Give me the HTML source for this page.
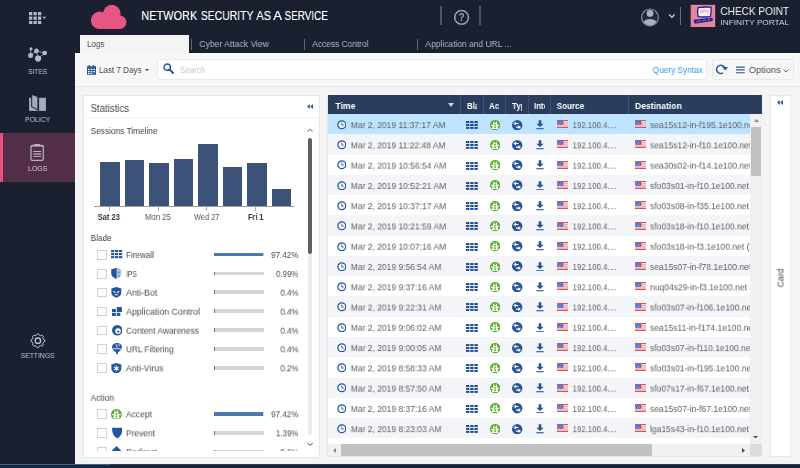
<!DOCTYPE html>
<html><head><meta charset="utf-8"><title>Network Security as a Service</title>
<style>
*{box-sizing:border-box;margin:0;padding:0}
html,body{width:800px;height:468px;overflow:hidden}
body{position:relative;background:#f4f4f4;font-family:"Liberation Sans",sans-serif;color:#333;font-size:9px}
.abs{position:absolute}
#top{position:absolute;left:0;top:0;width:800px;height:53px;background:#1a2030}
#side{position:absolute;left:0;top:0;width:75px;height:468px;background:#1a2030}
#bottom{position:absolute;left:0;top:464px;width:800px;height:4px;background:#1b2537}
#bottomline{position:absolute;left:0;top:464px;width:110px;height:1.300px;background:#2f6aa8;z-index:2}
.navlbl{position:absolute;left:0;width:75px;text-align:center;color:#c9ced8;font-size:7.2px;letter-spacing:.2px}
#active{position:absolute;left:0;top:133px;width:75px;height:49px;background:#522e49;border-left:3px solid #e8517f}
#title{position:absolute;left:141px;top:9px;color:#fff;font-size:12.2px;line-height:16px;white-space:nowrap}
.vsep{position:absolute;width:1px;background:#6b7180}
.tab{position:absolute;top:35px;height:18px;color:#c4c8d0;font-size:8.6px;line-height:18px;white-space:nowrap}
#tab1{left:80px;width:109px;background:#f4f4f4;color:#333;padding-left:7px}
#cp1{position:absolute;left:720px;top:5px;color:#fff;font-size:12.6px;line-height:14px;white-space:nowrap;letter-spacing:.1px}
#cp2{position:absolute;left:720px;top:18.5px;color:#e6e8ec;font-size:7.7px;line-height:9px;white-space:nowrap;letter-spacing:.55px}
#toolbar{position:absolute;left:75px;top:53px;width:725px;height:34px;background:#f7f7f7;border-bottom:1px solid #e2e5eb}
#search{position:absolute;left:157.200px;top:59.400px;width:549.700px;height:20.900px;background:#fff;border:1px solid #e6e9ee;border-radius:2px}
#btns{position:absolute;left:712px;top:59.400px;width:81.700px;height:20.900px;background:#f7f7f7;border:1px solid #e6e9ee;border-radius:2px}
.t9{position:absolute;font-size:8.8px;line-height:12px;white-space:nowrap}
#stats{position:absolute;left:83px;top:95px;width:237px;height:362.500px;background:#fff;border:1px solid #e4e7ee;overflow:hidden}
#grid{position:absolute;left:327px;top:95px;width:435px;height:361.500px;background:#fff;border:1px solid #e4e7ee;overflow:hidden}
#card{position:absolute;left:769.500px;top:95px;width:21.500px;height:361.500px;background:#fff;border:1px solid #e8eaf0}
#ghead{position:absolute;left:327.5px;top:95px;width:434.5px;height:19px;background:#2b3d5c}
.gh{position:absolute;top:95px;height:19px;line-height:19.5px;color:#fff;font-weight:bold;font-size:8.8px;white-space:nowrap;overflow:hidden;letter-spacing:-.2px}
.row{position:absolute;left:327.5px;width:423px;background:#fff;overflow:hidden}
.row.sel{background:#bfe4ff}
.row.alt{background:#f4f5f8}
.c{position:absolute;top:.6px;height:100%;display:flex;align-items:center;white-space:nowrap;font-size:8.7px;color:#444;overflow:hidden}
.ic{display:block}
.c-clock{left:9px}.clock{width:9.600px;height:9.600px}
.c-bl{left:138.900px;top:.9px}.blade{width:11.900px;height:8px}
.c-ac{left:162.300px}.acc{width:10.200px;height:10.200px}
.c-ty{left:184.800px}.typ{width:10.400px;height:10.400px}
.c-in{left:208.300px}.dl{width:8px;height:9.700px}
.c-sf{left:229px;top:.1px}.flag{width:11.400px;height:8px}
.c-df{left:307.400px;top:.1px}
.lbl{position:absolute;font-size:8.7px;line-height:12px;color:#444;white-space:nowrap}
.cb{position:absolute;width:9.600px;height:9.600px;border:1px solid #d2d2d2;background:#fff}
.pbar{position:absolute;left:214.200px;width:50.300px;height:3.800px;background:#d5d5d5}
.pbar i{position:absolute;left:0;top:0;height:3.800px;background:#4a78b0;display:block}
.pct{position:absolute;width:60px;left:239px;text-align:right;font-size:8.7px;line-height:12px;color:#444}
.bar{position:absolute;background:#3d5279}
.sicw{display:flex;align-items:center;justify-content:flex-start}
.sic{display:block}
.tx{position:absolute;left:0;top:0;white-space:nowrap;transform-origin:0 0;will-change:transform}

</style></head><body>
<div id="top"></div>
<div id="side"></div>
<!-- app grid icon -->
<svg class="abs" style="left:28.7px;top:11.8px;width:18px;height:12.4px" viewBox="0 0 18 12.4">
<g fill="#b4b9c6"><rect x="0" y="0" width="3.3" height="3.3"/><rect x="4.5" y="0" width="3.3" height="3.3"/><rect x="9" y="0" width="3.3" height="3.3"/>
<rect x="0" y="4.5" width="3.3" height="3.3"/><rect x="4.5" y="4.5" width="3.3" height="3.3"/><rect x="9" y="4.5" width="3.3" height="3.3"/>
<rect x="0" y="9" width="3.3" height="3.3"/><rect x="4.5" y="9" width="3.3" height="3.3"/><rect x="9" y="9" width="3.3" height="3.3"/>
<path d="M13.4 4.8h3.8l-1.9 2.2z"/></g></svg>
<!-- sites icon -->
<svg class="abs" style="left:26px;top:45px;width:24px;height:20px" viewBox="26 45 24 20">
<g stroke="#aab0bf" stroke-width="0.8" fill="none"><path d="M31 48.8L30.6 55.500M36.400 50.900L30.600 55.500M36.400 50.900L44.700 53M44.700 53L38.100 58.600M36.400 50.900L38.100 58.600"/></g>
<g fill="#b4b9c6"><circle cx="31" cy="48.800" r="1.500"/><circle cx="36.400" cy="50.900" r="2.300"/><circle cx="44.700" cy="53" r="2.300"/><circle cx="30.600" cy="55.500" r="2.500"/><circle cx="38.100" cy="58.600" r="3.100"/></g></svg>
<div class="tx" style="font-size:7.0px;line-height:7px;color:#c3c8d3;transform:translate(28.20px,68.00px) scaleX(0.9343);">SITES</div>
<!-- policy icon -->
<svg class="abs" style="left:28px;top:93px;width:20px;height:20px" viewBox="28 93 20 20">
<rect x="29.100" y="97.800" width="9" height="13.100" fill="#a3abbe"/>
<rect x="39.100" y="97.800" width="6.800" height="13.100" fill="#a3abbe"/>
<path d="M31.700 94.400L37.900 96.600V109.900L31.700 106.800z" fill="#a3abbe" stroke="#1a2030" stroke-width="1" stroke-linejoin="miter"/>
</svg>
<div class="tx" style="font-size:7.0px;line-height:7px;color:#c3c8d3;transform:translate(25.20px,116.00px) scaleX(0.9698);">POLICY</div>
<div id="active"></div>
<!-- logs icon -->
<svg class="abs" style="left:29px;top:143px;width:17px;height:19px" viewBox="29 143 17 19">
<rect x="31" y="145.400" width="12.300" height="15" rx="1.300" fill="none" stroke="#b9b2c4" stroke-width="1.200"/>
<rect x="34.300" y="144" width="5.700" height="2" rx=".5" fill="#b9b2c4"/><rect x="31" y="145" width="12.300" height="1.600" fill="#b9b2c4"/>
<path d="M33.200 151.500h8M33.200 156.400h8" stroke="#c9c2d2" stroke-width="0.900"/><path d="M33.200 154h8" stroke="#a297b0" stroke-width="1.600"/></svg>
<div class="tx" style="font-size:7.0px;line-height:7px;color:#d3cad6;transform:translate(28.00px,165.00px) scaleX(0.9922);">LOGS</div>
<!-- settings icon -->
<svg class="abs" style="left:29px;top:332px;width:18px;height:18px" viewBox="29 332 18 18">
<path d="M37.22 333.83L38.58 333.83L39.53 335.34L40.54 335.76L42.28 335.37L43.23 336.32L42.84 338.06L43.26 339.07L44.77 340.02L44.77 341.38L43.26 342.33L42.84 343.34L43.23 345.08L42.28 346.03L40.54 345.64L39.53 346.06L38.58 347.57L37.22 347.57L36.27 346.06L35.26 345.64L33.52 346.03L32.57 345.08L32.96 343.34L32.54 342.33L31.03 341.38L31.03 340.02L32.54 339.07L32.96 338.06L32.57 336.32L33.52 335.37L35.26 335.76L36.27 335.34z" fill="none" stroke="#c0c5d0" stroke-width="1" stroke-linejoin="round"/><circle cx="37.900" cy="340.700" r="2.700" fill="none" stroke="#c0c5d0" stroke-width="1.300"/></svg>
<div class="tx" style="font-size:7.0px;line-height:7px;color:#c3c8d3;transform:translate(20.80px,352.00px) scaleX(0.9656);">SETTINGS</div>

<!-- cloud -->
<svg class="abs" style="left:90px;top:4px;width:38px;height:26px" viewBox="90 4 38 26">
<g fill="#e65583"><circle cx="111.800" cy="13.700" r="8.900"/><circle cx="99.600" cy="20.300" r="8.700"/><circle cx="119.700" cy="22.300" r="6.700"/><rect x="99.600" y="18" width="20.100" height="11"/></g></svg>
<div class="tx" style="font-size:12.4px;line-height:14px;color:#ffffff;transform:translate(141.35px,9.00px) scaleX(0.8844);-webkit-text-stroke:.2px #fff;">NETWORK</div><div class="tx" style="font-size:12.4px;line-height:14px;color:#ffffff;transform:translate(200.85px,9.00px) scaleX(0.8381);-webkit-text-stroke:.2px #fff;">SECURITY</div><div class="tx" style="font-size:12.4px;line-height:14px;color:#ffffff;transform:translate(256.35px,9.00px) scaleX(0.8947);-webkit-text-stroke:.2px #fff;">AS</div><div class="tx" style="font-size:12.4px;line-height:14px;color:#ffffff;transform:translate(273.35px,9.00px) scaleX(1.0639);-webkit-text-stroke:.2px #fff;">A</div><div class="tx" style="font-size:12.4px;line-height:14px;color:#ffffff;transform:translate(284.60px,9.00px) scaleX(0.7987);-webkit-text-stroke:.2px #fff;">SERVICE</div>
<div class="vsep" style="left:440.200px;top:6.400px;height:19px;width:1.600px;background:#4f5461"></div>
<div class="vsep" style="left:479.200px;top:6.400px;height:19px;width:1.600px;background:#4f5461"></div>
<svg class="abs" style="left:453px;top:9px;width:17px;height:17px;will-change:transform" viewBox="453 9 17 17"><circle cx="461.600" cy="17.400" r="6.900" fill="none" stroke="#93a2bb" stroke-width="1.600"/>
<text x="461.600" y="21.300" text-anchor="middle" font-family="Liberation Sans, sans-serif" font-size="10" font-weight="bold" fill="#93a2bb">?</text></svg>
<!-- avatar -->
<svg class="abs" style="left:640px;top:8px;width:20px;height:19px" viewBox="640 8 20 19">
<defs><clipPath id="avc"><circle cx="650" cy="17.400" r="8"/></clipPath></defs>
<circle cx="650" cy="17.400" r="8.400" fill="#232938" stroke="#8a8e98" stroke-width="1.200"/>
<g clip-path="url(#avc)" fill="#a9afbe"><circle cx="650" cy="13.400" r="3.400"/><ellipse cx="650" cy="22.400" rx="6.300" ry="3.400"/></g></svg>
<svg class="abs" style="left:668px;top:13px;width:8px;height:6px" viewBox="668 13 8 6"><path d="M669.100 14.300L671.900 17.300 674.700 14.300" fill="none" stroke="#dde1e8" stroke-width="1.200"/></svg>
<div class="vsep" style="left:679.600px;top:6.500px;height:18.500px;width:1.400px;background:#666b78"></div>
<!-- logo -->
<svg class="abs" style="left:690px;top:4px;width:26px;height:24px" viewBox="690 4 26 24"><rect x="690.700" y="4.800" width="24.500" height="22.200" fill="#e8859b"/>
<path d="M698 7.600Q704.500 6.600 711 7.200Q711.600 12 710.400 16.600Q704 17.300 698.200 16.700Q697 12 698 7.600z" fill="#fbeef3" stroke="#1c1ca6" stroke-width="1.300" stroke-linejoin="round"/>
<path d="M700 13.500l1.500-3 1.200 2.200 1.500-3.200 1.300 2.500 1.600-2 1 2.800" fill="none" stroke="#d9739a" stroke-width=".6"/><path d="M700.500 10.500h2M706 13.800h2.500" stroke="#e9c64c" stroke-width=".6"/>
<path d="M693.600 19.800L712.500 17.700 712.800 21 694.600 23.800z" fill="#1c1ca6"/>
<path d="M696.500 21.800l2-.9.800.7 1.600-1.200M702.500 20.900l2.300-.8 1 .6M707.500 20.300l2-1.200.8.900" fill="none" stroke="#e6d35a" stroke-width=".6"/></svg>
<div class="tx" style="font-size:11.2px;line-height:12px;color:#f2f3f5;transform:translate(720.40px,5.00px) scaleX(0.8988);">CHECK POINT</div>
<div class="tx" style="font-size:7.7px;line-height:9px;color:#d0d3da;transform:translate(720.40px,18.00px) scaleX(1.0720);">INFINITY PORTAL</div>

<!-- tabs -->
<div class="tab" id="tab1"></div><div class="tx" style="font-size:9.2px;line-height:10px;color:#484848;transform:translate(87.00px,39.00px) scaleX(0.8772);">Logs</div>
<div class="vsep" style="left:190.5px;top:38.500px;height:11px;background:#5e6472"></div>
<div class="tx" style="font-size:9.2px;line-height:10px;color:#b4b9c4;transform:translate(199.30px,39.00px) scaleX(0.9357);">Cyber Attack View</div>
<div class="vsep" style="left:303.5px;top:38.500px;height:11px;background:#5e6472"></div>
<div class="tx" style="font-size:9.2px;line-height:10px;color:#b4b9c4;transform:translate(312.30px,39.00px) scaleX(0.9084);">Access Control</div>
<div class="vsep" style="left:416.5px;top:38.500px;height:11px;background:#5e6472"></div>
<div class="tx" style="font-size:9.2px;line-height:10px;color:#b4b9c4;transform:translate(425.40px,39.00px) scaleX(0.9183);">Application and URL ...</div>

<!-- toolbar -->
<div id="toolbar"></div>
<svg class="abs" style="left:87px;top:64.5px;width:9px;height:10px" viewBox="0 0 9 10"><rect x="0" y="1.2" width="9" height="8.6" fill="#2f5597"/><rect x="1.6" y="0" width="1.3" height="2.2" fill="#2f5597"/><rect x="6.1" y="0" width="1.3" height="2.2" fill="#2f5597"/>
<g fill="#fff"><rect x="1" y="3.800" width="1.6" height="1.300"/><rect x="3.700" y="3.800" width="1.6" height="1.300"/><rect x="6.400" y="3.800" width="1.600" height="1.300"/><rect x="1" y="6" width="1.600" height="1.300"/><rect x="3.700" y="6" width="1.600" height="1.300"/><rect x="6.400" y="6" width="1.600" height="1.300"/><rect x="1" y="8" width="1.600" height="1"/><rect x="3.700" y="8" width="1.600" height="1"/></g></svg>
<div class="tx" style="font-size:9.2px;line-height:10px;color:#444;transform:translate(98.90px,65.00px) scaleX(0.8790);">Last 7 Days</div>
<svg class="abs" style="left:144.600px;top:68.500px;width:4.200px;height:2.300px" viewBox="0 0 5 3"><path d="M0 0h5L2.500 3z" fill="#2f5597"/></svg>
<div id="search"></div>
<svg class="abs" style="left:162.500px;top:63px;width:11px;height:11px" viewBox="0 0 11 11"><circle cx="4.200" cy="4.200" r="3.200" fill="none" stroke="#2f5597" stroke-width="1.500"/><path d="M6.500 6.500L10 10" stroke="#2f5597" stroke-width="2" stroke-linecap="round"/></svg>
<div class="tx" style="font-size:9.2px;line-height:10px;color:#c4c4c4;transform:translate(180.10px,65.00px) scaleX(0.8576);">Search</div>
<div class="tx" style="font-size:9.2px;line-height:10px;color:#3a94ea;transform:translate(652.70px,65.00px) scaleX(0.9007);">Query Syntax</div>
<div id="btns"></div>
<svg class="abs" style="left:714px;top:62px;width:16px;height:15px" viewBox="714 62 16 15"><path d="M723.05 72.76A4.1 4.1 0 1 1 724.66 68.34" fill="none" stroke="#2d5694" stroke-width="1.500"/><path d="M722.300 66.900H727.900L725.300 70.400z" fill="#2d5694"/></svg>
<svg class="abs" style="left:736px;top:65.500px;width:9px;height:8px" viewBox="0 0 9 8"><path d="M0 1.100h8.800M0 3.900h8.800M0 6.700h8.800" stroke="#2d5694" stroke-width="1.150"/></svg>
<div class="tx" style="font-size:9.5px;line-height:11px;color:#4a4a4a;transform:translate(748.80px,64.00px) scaleX(0.9774);">Options</div>
<svg class="abs" style="left:782.500px;top:68.500px;width:6px;height:4px" viewBox="0 0 6 4"><path d="M.5.500L3 3 5.500.500" fill="none" stroke="#666" stroke-width="1"/></svg>

<!-- stats panel -->
<div id="stats"></div>
<div class="tx" style="font-size:10.3px;line-height:11px;color:#444;transform:translate(90.60px,103.00px) scaleX(0.9318);">Statistics</div>
<div class="abs" style="left:84px;top:117px;width:235px;height:0;border-top:1px dotted #e8eaee"></div>
<svg class="abs" style="left:307.300px;top:103.800px;width:6px;height:5px" viewBox="0 0 6 5"><path d="M2.800 0v5L0 2.500zM6 0v5L3.200 2.500z" fill="#2f5597"/></svg>
<div class="tx" style="font-size:9.3px;line-height:10px;color:#444;transform:translate(90.60px,126.00px) scaleX(0.8939);">Sessions Timeline</div>
<svg class="abs" style="left:307.100px;top:127.700px;width:6.200px;height:4.600px" viewBox="0 0 7 5"><path d="M.600 4L3.500 1.200 6.400 4" fill="none" stroke="#8a8a8a" stroke-width="1.200"/></svg>
<div class="abs" style="left:308.400px;top:252px;width:3.800px;height:183px;background:#ebebeb;border-radius:1.900px;z-index:0"></div>
<div class="abs" style="left:308.400px;top:138px;width:3.800px;height:116px;background:#606060;border-radius:1.900px"></div>
<svg class="abs" style="left:307.100px;top:441.700px;width:6.200px;height:4.600px" viewBox="0 0 7 5"><path d="M.600 1L3.500 3.800 6.400 1" fill="none" stroke="#8a8a8a" stroke-width="1.200"/></svg>
<!-- chart -->
<div class="bar" style="left:100px;top:162px;width:19.500px;height:44px"></div>
<div class="bar" style="left:124.500px;top:160px;width:19.500px;height:46px"></div>
<div class="bar" style="left:149px;top:163px;width:19.500px;height:43px"></div>
<div class="bar" style="left:173.500px;top:158.500px;width:19.500px;height:47.500px"></div>
<div class="bar" style="left:198px;top:143.500px;width:19.500px;height:62.500px"></div>
<div class="bar" style="left:222.500px;top:166.500px;width:19.500px;height:39.500px"></div>
<div class="bar" style="left:247px;top:163px;width:19.500px;height:43px"></div>
<div class="bar" style="left:271.500px;top:189px;width:19.500px;height:17px"></div>
<div class="abs" style="left:94px;top:206px;width:201px;height:1px;background:#9a9a9a"></div><div class="abs" style="left:108.5px;top:207px;width:1px;height:3.500px;background:#aaa"></div><div class="abs" style="left:157.5px;top:207px;width:1px;height:3.500px;background:#aaa"></div><div class="abs" style="left:206px;top:207px;width:1px;height:3.500px;background:#aaa"></div><div class="abs" style="left:255px;top:207px;width:1px;height:3.500px;background:#aaa"></div>
<div class="tx" style="font-size:8.4px;line-height:10px;color:#333;font-weight:bold;transform:translate(97.60px,212.00px) scaleX(0.9051);">Sat 23</div>
<div class="tx" style="font-size:8.4px;line-height:10px;color:#555;transform:translate(145.00px,212.00px) scaleX(0.9280);">Mon 25</div>
<div class="tx" style="font-size:8.4px;line-height:10px;color:#555;transform:translate(194.00px,212.00px) scaleX(0.8820);">Wed 27</div>
<div class="tx" style="font-size:8.4px;line-height:10px;color:#333;font-weight:bold;transform:translate(248.00px,212.00px) scaleX(0.8738);">Fri 1</div>
<div class="tx" style="font-size:9.3px;line-height:10px;color:#444;transform:translate(90.60px,233.00px) scaleX(0.8828);">Blade</div>
<div class="abs" style="left:84px;top:225px;width:220px;height:226px;overflow:hidden"><div class="abs" style="left:-84px;top:-225px;width:800px;height:468px"><div class="cb" style="left:97.200px;top:250.10px"></div><div class="abs sicw" style="left:111px;top:248.70px;height:12px;width:12px"><svg class="sic" viewBox="0 0 12 9" style="width:11.5px;height:8.5px"><rect x="0.0" y="0.0" width="3.4" height="2.3" fill="#27559a"/><rect x="4.2" y="0.0" width="3.4" height="2.3" fill="#27559a"/><rect x="8.4" y="0.0" width="3.4" height="2.3" fill="#27559a"/><rect x="0.0" y="3.2" width="3.4" height="2.3" fill="#27559a"/><rect x="4.2" y="3.2" width="3.4" height="2.3" fill="#27559a"/><rect x="8.4" y="3.2" width="3.4" height="2.3" fill="#27559a"/><rect x="0.0" y="6.4" width="3.4" height="2.3" fill="#27559a"/><rect x="4.2" y="6.4" width="3.4" height="2.3" fill="#27559a"/><rect x="8.4" y="6.4" width="3.4" height="2.3" fill="#27559a"/></svg></div><div class="tx" style="font-size:9.3px;line-height:10px;color:#4c4c4c;transform:translate(126.00px,250.00px) scaleX(0.8739);">Firewall</div><div class="pbar" style="top:252.70px"><i style="width:97%"></i></div><div class="tx" style="font-size:9.3px;line-height:10px;color:#4c4c4c;transform:translate(271.00px,250.00px) scaleX(0.8687);">97.42%</div>
<div class="cb" style="left:97.200px;top:269.00px"></div><div class="abs sicw" style="left:111.1px;top:267.60px;height:12px;width:12px"><svg class="sic" viewBox="0 0 10.700 10.700" style="width:10.700px;height:10.700px"><defs><clipPath id="ipsl"><rect x="0" y="0" width="5.600" height="11"/></clipPath><pattern id="ipsd" width="1.400" height="1.400" patternUnits="userSpaceOnUse"><rect width=".9" height=".9" fill="#27559a"/></pattern></defs><path d="M5.350 0L10.400 1.600 10.200 6.800Q9.500 9.600 5.350 10.700Q1.200 9.600 .500 6.800L.300 1.600z" fill="#27559a" clip-path="url(#ipsl)"/><path d="M5.350 0L10.400 1.600 10.200 6.800Q9.500 9.600 5.350 10.700Q1.200 9.600 .500 6.800L.300 1.600z" fill="url(#ipsd)" opacity=".75"/><path d="M5.350 0L10.400 1.600 10.200 6.800Q9.500 9.600 5.350 10.700Q1.200 9.600 .500 6.800L.300 1.600z" fill="#27559a" opacity=".18"/></svg></div><div class="tx" style="font-size:9.3px;line-height:10px;color:#4c4c4c;transform:translate(126.00px,268.90px) scaleX(0.7338);">IPS</div><div class="pbar" style="top:271.60px"><i style="width:2%"></i></div><div class="tx" style="font-size:9.3px;line-height:10px;color:#4c4c4c;transform:translate(276.00px,268.90px) scaleX(0.8495);">0.99%</div>
<div class="cb" style="left:97.200px;top:287.80px"></div><div class="abs sicw" style="left:111.1px;top:286.40px;height:12px;width:12px"><svg class="sic" viewBox="0 0 10.700 10.700" style="width:10.700px;height:10.700px"><path d="M5.350 0L10.400 1.600 10.200 6.800Q9.500 9.600 5.350 10.700Q1.200 9.600 .500 6.800L.300 1.600z" fill="#27559a"/><path d="M2.200 3.700L4.700 5 4.500 6 2.600 5.300zM8.500 3.700L6 5 6.200 6 8.100 5.300z" fill="#fff"/><rect x="3.700" y="7.300" width="3.300" height=".9" fill="#fff"/></svg></div><div class="tx" style="font-size:9.3px;line-height:10px;color:#4c4c4c;transform:translate(126.00px,287.70px) scaleX(0.9491);">Anti-Bot</div><div class="pbar" style="top:290.40px"><i style="width:2%"></i></div><div class="tx" style="font-size:9.3px;line-height:10px;color:#4c4c4c;transform:translate(280.40px,287.70px) scaleX(0.8492);">0.4%</div>
<div class="cb" style="left:97.200px;top:306.80px"></div><div class="abs sicw" style="left:112px;top:305.40px;height:12px;width:12px"><svg class="sic" viewBox="0 0 10 9.600" style="width:10px;height:9.600px"><rect x="0" y="1.900" width="3.900" height="3.100" fill="#27559a"/><rect x="4.800" y="0" width="5.100" height="5" fill="#27559a"/><rect x="0" y="5.800" width="3.900" height="3.700" fill="#27559a"/><rect x="4.800" y="5.800" width="3.500" height="3.700" fill="#27559a"/></svg></div><div class="tx" style="font-size:9.3px;line-height:10px;color:#4c4c4c;transform:translate(126.00px,306.70px) scaleX(0.9480);">Application Control</div><div class="pbar" style="top:309.40px"><i style="width:2%"></i></div><div class="tx" style="font-size:9.3px;line-height:10px;color:#4c4c4c;transform:translate(280.40px,306.70px) scaleX(0.8492);">0.4%</div>
<div class="cb" style="left:97.200px;top:325.80px"></div><div class="abs sicw" style="left:111.5px;top:324.40px;height:12px;width:12px"><svg class="sic" viewBox="0 0 10.500 10.500" style="width:10.500px;height:10.500px"><circle cx="5.250" cy="5.250" r="5.250" fill="#27559a"/><circle cx="6" cy="6.100" r="2.800" fill="#fff"/><circle cx="6.300" cy="6.600" r="1.150" fill="#27559a"/></svg></div><div class="tx" style="font-size:9.3px;line-height:10px;color:#4c4c4c;transform:translate(126.00px,325.70px) scaleX(0.9070);">Content Awareness</div><div class="pbar" style="top:328.40px"><i style="width:2%"></i></div><div class="tx" style="font-size:9.3px;line-height:10px;color:#4c4c4c;transform:translate(280.40px,325.70px) scaleX(0.8492);">0.4%</div>
<div class="cb" style="left:97.200px;top:344.40px"></div><div class="abs sicw" style="left:112.1px;top:343.00px;height:12px;width:12px"><svg class="sic" viewBox="0 0 10 11.200" style="width:10px;height:11.200px"><ellipse cx="5" cy="4.200" rx="5" ry="4.200" fill="#27559a"/><path d="M3.600 1.200l1.500 1-.8 1.400 1.500.9M6.500 1l1.200 1.300-.6 1" stroke="#fff" stroke-width=".8" fill="none"/><path d="M.600 5.800h8.800" stroke="#fff" stroke-width=".8"/><path d="M2 7.800h6L5.900 9.300V11.200H4.100V9.300z" fill="#27559a"/></svg></div><div class="tx" style="font-size:9.3px;line-height:10px;color:#4c4c4c;transform:translate(126.00px,344.30px) scaleX(0.8828);">URL Filtering</div><div class="pbar" style="top:347.00px"><i style="width:2%"></i></div><div class="tx" style="font-size:9.3px;line-height:10px;color:#4c4c4c;transform:translate(280.40px,344.30px) scaleX(0.8492);">0.4%</div>
<div class="cb" style="left:97.200px;top:363.40px"></div><div class="abs sicw" style="left:111.1px;top:362.00px;height:12px;width:12px"><svg class="sic" viewBox="0 0 10.700 10.700" style="width:10.700px;height:10.700px"><path d="M5.350 0L10.400 1.600 10.200 6.800Q9.500 9.600 5.350 10.700Q1.200 9.600 .500 6.800L.300 1.600z" fill="#27559a"/><path d="M5.350 2.400V8.400M2.700 3.900L8 6.900M2.700 6.900L8 3.900" stroke="#fff" stroke-width=".9"/><circle cx="5.350" cy="5.400" r="1.300" fill="#fff"/></svg></div><div class="tx" style="font-size:9.3px;line-height:10px;color:#4c4c4c;transform:translate(126.00px,363.30px) scaleX(0.9316);">Anti-Virus</div><div class="pbar" style="top:366.00px"><i style="width:2%"></i></div><div class="tx" style="font-size:9.3px;line-height:10px;color:#4c4c4c;transform:translate(280.40px,363.30px) scaleX(0.8492);">0.2%</div>
<div class="cb" style="left:97.200px;top:409.40px"></div><div class="abs sicw" style="left:111px;top:408.00px;height:12px;width:12px"><svg class="sic" style="width:10.800px;height:10.800px" viewBox="0 0 10.200 10.200"><circle cx="5.100" cy="5.100" r="5.100" fill="#55ab26"/><path d="M3.500 1.500H6.700L8.200 8.900H2z" fill="#fff"/><path d="M.9 5.300h8.400" stroke="#fff" stroke-width="1.100"/><path d="M5.100 1.200V9.200" stroke="#55ab26" stroke-width="1.500" stroke-dasharray="1.700 .8"/></svg></div><div class="tx" style="font-size:9.3px;line-height:10px;color:#4c4c4c;transform:translate(126.00px,409.30px) scaleX(0.9145);">Accept</div><div class="pbar" style="top:412.00px"><i style="width:97%"></i></div><div class="tx" style="font-size:9.3px;line-height:10px;color:#4c4c4c;transform:translate(271.00px,409.30px) scaleX(0.8687);">97.42%</div>
<div class="cb" style="left:97.200px;top:428.40px"></div><div class="abs sicw" style="left:111.5px;top:427.00px;height:12px;width:12px"><svg class="sic" viewBox="0 0 11 12" style="width:10.500px;height:11.500px"><path d="M0 .8h11c0 5.500-1.600 8.800-5.500 11.200C1.600 9.600 0 6.300 0 .8z" fill="#27559a"/></svg></div><div class="tx" style="font-size:9.3px;line-height:10px;color:#4c4c4c;transform:translate(126.00px,428.30px) scaleX(0.9048);">Prevent</div><div class="pbar" style="top:431.00px"><i style="width:2.5%"></i></div><div class="tx" style="font-size:9.3px;line-height:10px;color:#4c4c4c;transform:translate(276.00px,428.30px) scaleX(0.8495);">1.39%</div>
<div class="cb" style="left:97.200px;top:447.30px"></div><div class="abs sicw" style="left:111px;top:445.90px;height:12px;width:12px"><svg class="sic" viewBox="0 0 12 12" style="width:11px;height:11px"><path d="M6 0l6 6-6 6-6-6z" fill="#27559a"/></svg></div><div class="tx" style="font-size:9.3px;line-height:10px;color:#4c4c4c;transform:translate(126.00px,447.20px) scaleX(0.8952);">Redirect</div><div class="pbar" style="top:449.90px"><i style="width:2%"></i></div><div class="tx" style="font-size:9.3px;line-height:10px;color:#4c4c4c;transform:translate(280.40px,447.20px) scaleX(0.8492);">0.6%</div><div class="tx" style="font-size:9.3px;line-height:10px;color:#444;transform:translate(90.60px,392.80px) scaleX(0.9092);">Action</div></div></div>

<!-- grid -->
<div id="grid"></div>
<div id="ghead"></div>
<div class="tx" style="font-size:9.6px;line-height:11px;color:#fff;font-weight:bold;transform:translate(335.40px,100.00px) scaleX(0.8996);">Time</div>
<svg class="abs" style="left:448px;top:103px;width:6px;height:4px" viewBox="0 0 6 4"><path d="M0 0h6L3 4z" fill="#cfd5e0"/></svg>
<div class="vsep" style="left:459.500px;top:95px;height:19px;background:#3f5273"></div>
<div class="abs" style="left:467.00px;top:98px;width:10.30px;height:15px;overflow:hidden"><div class="tx" style="font-size:9.6px;line-height:11px;color:#fff;font-weight:bold;transform:translate(0px,2.00px) scaleX(0.8233);">Bla</div></div>
<div class="vsep" style="left:482.500px;top:95px;height:19px;background:#3f5273"></div>
<div class="abs" style="left:489.00px;top:98px;width:10.30px;height:15px;overflow:hidden"><div class="tx" style="font-size:9.6px;line-height:11px;color:#fff;font-weight:bold;transform:translate(0px,2.00px) scaleX(0.8274);">Act</div></div>
<div class="vsep" style="left:505px;top:95px;height:19px;background:#3f5273"></div>
<div class="abs" style="left:512.00px;top:98px;width:9.80px;height:15px;overflow:hidden"><div class="tx" style="font-size:9.6px;line-height:11px;color:#fff;font-weight:bold;transform:translate(0px,2.00px) scaleX(0.8315);">Typ</div></div>
<div class="vsep" style="left:527.500px;top:95px;height:19px;background:#3f5273"></div>
<div class="abs" style="left:534.40px;top:98px;width:10.30px;height:15px;overflow:hidden"><div class="tx" style="font-size:9.6px;line-height:11px;color:#fff;font-weight:bold;transform:translate(0px,2.00px) scaleX(0.8203);">Inte</div></div>
<div class="vsep" style="left:549.500px;top:95px;height:19px;background:#3f5273"></div>
<div class="tx" style="font-size:9.6px;line-height:11px;color:#fff;font-weight:bold;transform:translate(556.60px,100.00px) scaleX(0.8480);">Source</div>
<div class="vsep" style="left:628px;top:95px;height:19px;background:#3f5273"></div>
<div class="tx" style="font-size:9.6px;line-height:11px;color:#fff;font-weight:bold;transform:translate(635.00px,100.00px) scaleX(0.8953);">Destination</div>
<div class="row sel" style="top:114.00px;height:20.27px"><span class="c c-clock"><svg class="ic clock" viewBox="0 0 10 10"><circle cx="5" cy="5" r="4.100" fill="#f4f8ff" stroke="#2d5694" stroke-width="1.300"/><path d="M5 2.700V5.300H7" fill="none" stroke="#2d5694" stroke-width=".9"/></svg></span><span class="c c-bl"><svg class="ic blade" viewBox="0 0 12 8"><rect x="0.00" y="0.00" width="3.400" height="2.050" fill="#1f4d97"/><rect x="4.25" y="0.00" width="3.400" height="2.050" fill="#1f4d97"/><rect x="8.50" y="0.00" width="3.400" height="2.050" fill="#1f4d97"/><rect x="0.00" y="2.95" width="3.400" height="2.050" fill="#1f4d97"/><rect x="4.25" y="2.95" width="3.400" height="2.050" fill="#1f4d97"/><rect x="8.50" y="2.95" width="3.400" height="2.050" fill="#1f4d97"/><rect x="0.00" y="5.90" width="3.400" height="2.050" fill="#1f4d97"/><rect x="4.25" y="5.90" width="3.400" height="2.050" fill="#1f4d97"/><rect x="8.50" y="5.90" width="3.400" height="2.050" fill="#1f4d97"/></svg></span><span class="c c-ac"><svg class="ic acc" viewBox="0 0 10.200 10.200"><circle cx="5.100" cy="5.100" r="5.100" fill="#55ab26"/><path d="M3.500 1.500H6.700L8.200 8.900H2z" fill="#fff"/><path d="M.9 5.300h8.400" stroke="#fff" stroke-width="1.100"/><path d="M5.100 1.200V9.200" stroke="#55ab26" stroke-width="1.500" stroke-dasharray="1.700 .8"/></svg></span><span class="c c-ty"><svg class="ic typ" viewBox="0 0 10.400 10.400"><circle cx="5.200" cy="5.200" r="5.200" fill="#2a5592"/><path d="M1.500 3.500L4 1.600V2.900H6.400V4.100H4V5.400z" fill="#fff"/><path d="M9 7.100L6.500 5.200V6.500H4.100V7.700H6.500V9z" fill="#fff"/></svg></span><span class="c c-in"><svg class="ic dl" viewBox="-.3 -.3 7.400 9" preserveAspectRatio="none"><path d="M2.200 0h2.400v3.200h2.200L3.400 6.300 0 3.200h2.200z" fill="#24529a"/><rect x="0" y="7.300" width="6.800" height="1" fill="#24529a"/></svg></span><span class="c c-sf"><svg class="ic flag" viewBox="0 0 11.400 8"><rect width="11.400" height="8" fill="#f7e3e3"/><rect y="0" width="11.400" height="1.100" fill="#e2504c"/><rect y="2.300" width="11.400" height="1" fill="#ee9a96"/><rect y="4.500" width="11.400" height="1" fill="#ee9a96"/><rect y="6.700" width="11.400" height="1.300" fill="#e2504c"/><rect x=".3" y=".9" width="6" height="3.800" fill="#3f62d2"/><path d="M1.200 2h.8M2.900 2h.8M4.600 2h.8M2 3.400h.8M3.800 3.400h.8" stroke="#dfe6fb" stroke-width=".7"/></svg></span><span class="c c-df"><svg class="ic flag" viewBox="0 0 11.400 8"><rect width="11.400" height="8" fill="#f7e3e3"/><rect y="0" width="11.400" height="1.100" fill="#e2504c"/><rect y="2.300" width="11.400" height="1" fill="#ee9a96"/><rect y="4.500" width="11.400" height="1" fill="#ee9a96"/><rect y="6.700" width="11.400" height="1.300" fill="#e2504c"/><rect x=".3" y=".9" width="6" height="3.800" fill="#3f62d2"/><path d="M1.200 2h.8M2.900 2h.8M4.600 2h.8M2 3.400h.8M3.800 3.400h.8" stroke="#dfe6fb" stroke-width=".7"/></svg></span></div>
<div class="tx" style="font-size:9.3px;line-height:10px;color:#606060;transform:translate(350.80px,120.10px) scaleX(0.9130);">Mar 2, 2019 11:37:17 AM</div>
<div class="tx" style="font-size:9.3px;line-height:10px;color:#606060;transform:translate(572.60px,120.10px) scaleX(0.8432);">192.100.4....</div>
<div class="abs" style="left:650.00px;top:118px;width:99.60px;height:14px;overflow:hidden"><div class="tx" style="font-size:9.3px;line-height:10px;color:#606060;transform:translate(0px,2.10px) scaleX(0.9150);">sea15s12-in-f195.1e100.net</div></div>
<div class="row alt" style="top:134.27px;height:20.27px"><span class="c c-clock"><svg class="ic clock" viewBox="0 0 10 10"><circle cx="5" cy="5" r="4.100" fill="#f4f8ff" stroke="#2d5694" stroke-width="1.300"/><path d="M5 2.700V5.300H7" fill="none" stroke="#2d5694" stroke-width=".9"/></svg></span><span class="c c-bl"><svg class="ic blade" viewBox="0 0 12 8"><rect x="0.00" y="0.00" width="3.400" height="2.050" fill="#1f4d97"/><rect x="4.25" y="0.00" width="3.400" height="2.050" fill="#1f4d97"/><rect x="8.50" y="0.00" width="3.400" height="2.050" fill="#1f4d97"/><rect x="0.00" y="2.95" width="3.400" height="2.050" fill="#1f4d97"/><rect x="4.25" y="2.95" width="3.400" height="2.050" fill="#1f4d97"/><rect x="8.50" y="2.95" width="3.400" height="2.050" fill="#1f4d97"/><rect x="0.00" y="5.90" width="3.400" height="2.050" fill="#1f4d97"/><rect x="4.25" y="5.90" width="3.400" height="2.050" fill="#1f4d97"/><rect x="8.50" y="5.90" width="3.400" height="2.050" fill="#1f4d97"/></svg></span><span class="c c-ac"><svg class="ic acc" viewBox="0 0 10.200 10.200"><circle cx="5.100" cy="5.100" r="5.100" fill="#55ab26"/><path d="M3.500 1.500H6.700L8.200 8.900H2z" fill="#fff"/><path d="M.9 5.300h8.400" stroke="#fff" stroke-width="1.100"/><path d="M5.100 1.200V9.200" stroke="#55ab26" stroke-width="1.500" stroke-dasharray="1.700 .8"/></svg></span><span class="c c-ty"><svg class="ic typ" viewBox="0 0 10.400 10.400"><circle cx="5.200" cy="5.200" r="5.200" fill="#2a5592"/><path d="M1.500 3.500L4 1.600V2.900H6.400V4.100H4V5.400z" fill="#fff"/><path d="M9 7.100L6.500 5.200V6.500H4.100V7.700H6.500V9z" fill="#fff"/></svg></span><span class="c c-in"><svg class="ic dl" viewBox="-.3 -.3 7.400 9" preserveAspectRatio="none"><path d="M2.200 0h2.400v3.200h2.200L3.400 6.300 0 3.200h2.200z" fill="#24529a"/><rect x="0" y="7.300" width="6.800" height="1" fill="#24529a"/></svg></span><span class="c c-sf"><svg class="ic flag" viewBox="0 0 11.400 8"><rect width="11.400" height="8" fill="#f7e3e3"/><rect y="0" width="11.400" height="1.100" fill="#e2504c"/><rect y="2.300" width="11.400" height="1" fill="#ee9a96"/><rect y="4.500" width="11.400" height="1" fill="#ee9a96"/><rect y="6.700" width="11.400" height="1.300" fill="#e2504c"/><rect x=".3" y=".9" width="6" height="3.800" fill="#3f62d2"/><path d="M1.200 2h.8M2.900 2h.8M4.600 2h.8M2 3.400h.8M3.800 3.400h.8" stroke="#dfe6fb" stroke-width=".7"/></svg></span><span class="c c-df"><svg class="ic flag" viewBox="0 0 11.400 8"><rect width="11.400" height="8" fill="#f7e3e3"/><rect y="0" width="11.400" height="1.100" fill="#e2504c"/><rect y="2.300" width="11.400" height="1" fill="#ee9a96"/><rect y="4.500" width="11.400" height="1" fill="#ee9a96"/><rect y="6.700" width="11.400" height="1.300" fill="#e2504c"/><rect x=".3" y=".9" width="6" height="3.800" fill="#3f62d2"/><path d="M1.200 2h.8M2.900 2h.8M4.600 2h.8M2 3.400h.8M3.800 3.400h.8" stroke="#dfe6fb" stroke-width=".7"/></svg></span></div>
<div class="tx" style="font-size:9.3px;line-height:10px;color:#606060;transform:translate(350.80px,140.37px) scaleX(0.9130);">Mar 2, 2019 11:22:48 AM</div>
<div class="tx" style="font-size:9.3px;line-height:10px;color:#606060;transform:translate(572.60px,140.37px) scaleX(0.8432);">192.100.4....</div>
<div class="abs" style="left:650.00px;top:138px;width:99.60px;height:14px;overflow:hidden"><div class="tx" style="font-size:9.3px;line-height:10px;color:#606060;transform:translate(0px,2.37px) scaleX(0.9150);">sea15s12-in-f10.1e100.net</div></div>
<div class="row" style="top:154.54px;height:20.27px"><span class="c c-clock"><svg class="ic clock" viewBox="0 0 10 10"><circle cx="5" cy="5" r="4.100" fill="#f4f8ff" stroke="#2d5694" stroke-width="1.300"/><path d="M5 2.700V5.300H7" fill="none" stroke="#2d5694" stroke-width=".9"/></svg></span><span class="c c-bl"><svg class="ic blade" viewBox="0 0 12 8"><rect x="0.00" y="0.00" width="3.400" height="2.050" fill="#1f4d97"/><rect x="4.25" y="0.00" width="3.400" height="2.050" fill="#1f4d97"/><rect x="8.50" y="0.00" width="3.400" height="2.050" fill="#1f4d97"/><rect x="0.00" y="2.95" width="3.400" height="2.050" fill="#1f4d97"/><rect x="4.25" y="2.95" width="3.400" height="2.050" fill="#1f4d97"/><rect x="8.50" y="2.95" width="3.400" height="2.050" fill="#1f4d97"/><rect x="0.00" y="5.90" width="3.400" height="2.050" fill="#1f4d97"/><rect x="4.25" y="5.90" width="3.400" height="2.050" fill="#1f4d97"/><rect x="8.50" y="5.90" width="3.400" height="2.050" fill="#1f4d97"/></svg></span><span class="c c-ac"><svg class="ic acc" viewBox="0 0 10.200 10.200"><circle cx="5.100" cy="5.100" r="5.100" fill="#55ab26"/><path d="M3.500 1.500H6.700L8.200 8.900H2z" fill="#fff"/><path d="M.9 5.300h8.400" stroke="#fff" stroke-width="1.100"/><path d="M5.100 1.200V9.200" stroke="#55ab26" stroke-width="1.500" stroke-dasharray="1.700 .8"/></svg></span><span class="c c-ty"><svg class="ic typ" viewBox="0 0 10.400 10.400"><circle cx="5.200" cy="5.200" r="5.200" fill="#2a5592"/><path d="M1.500 3.500L4 1.600V2.900H6.400V4.100H4V5.400z" fill="#fff"/><path d="M9 7.100L6.500 5.200V6.500H4.100V7.700H6.500V9z" fill="#fff"/></svg></span><span class="c c-in"><svg class="ic dl" viewBox="-.3 -.3 7.400 9" preserveAspectRatio="none"><path d="M2.200 0h2.400v3.200h2.200L3.400 6.300 0 3.200h2.200z" fill="#24529a"/><rect x="0" y="7.300" width="6.800" height="1" fill="#24529a"/></svg></span><span class="c c-sf"><svg class="ic flag" viewBox="0 0 11.400 8"><rect width="11.400" height="8" fill="#f7e3e3"/><rect y="0" width="11.400" height="1.100" fill="#e2504c"/><rect y="2.300" width="11.400" height="1" fill="#ee9a96"/><rect y="4.500" width="11.400" height="1" fill="#ee9a96"/><rect y="6.700" width="11.400" height="1.300" fill="#e2504c"/><rect x=".3" y=".9" width="6" height="3.800" fill="#3f62d2"/><path d="M1.200 2h.8M2.900 2h.8M4.600 2h.8M2 3.400h.8M3.800 3.400h.8" stroke="#dfe6fb" stroke-width=".7"/></svg></span><span class="c c-df"><svg class="ic flag" viewBox="0 0 11.400 8"><rect width="11.400" height="8" fill="#f7e3e3"/><rect y="0" width="11.400" height="1.100" fill="#e2504c"/><rect y="2.300" width="11.400" height="1" fill="#ee9a96"/><rect y="4.500" width="11.400" height="1" fill="#ee9a96"/><rect y="6.700" width="11.400" height="1.300" fill="#e2504c"/><rect x=".3" y=".9" width="6" height="3.800" fill="#3f62d2"/><path d="M1.200 2h.8M2.900 2h.8M4.600 2h.8M2 3.400h.8M3.800 3.400h.8" stroke="#dfe6fb" stroke-width=".7"/></svg></span></div>
<div class="tx" style="font-size:9.3px;line-height:10px;color:#606060;transform:translate(350.80px,160.64px) scaleX(0.9130);">Mar 2, 2019 10:56:54 AM</div>
<div class="tx" style="font-size:9.3px;line-height:10px;color:#606060;transform:translate(572.60px,160.64px) scaleX(0.8432);">192.100.4....</div>
<div class="abs" style="left:650.00px;top:158px;width:99.60px;height:14px;overflow:hidden"><div class="tx" style="font-size:9.3px;line-height:10px;color:#606060;transform:translate(0px,2.64px) scaleX(0.9150);">sea30s02-in-f14.1e100.net</div></div>
<div class="row alt" style="top:174.81px;height:20.27px"><span class="c c-clock"><svg class="ic clock" viewBox="0 0 10 10"><circle cx="5" cy="5" r="4.100" fill="#f4f8ff" stroke="#2d5694" stroke-width="1.300"/><path d="M5 2.700V5.300H7" fill="none" stroke="#2d5694" stroke-width=".9"/></svg></span><span class="c c-bl"><svg class="ic blade" viewBox="0 0 12 8"><rect x="0.00" y="0.00" width="3.400" height="2.050" fill="#1f4d97"/><rect x="4.25" y="0.00" width="3.400" height="2.050" fill="#1f4d97"/><rect x="8.50" y="0.00" width="3.400" height="2.050" fill="#1f4d97"/><rect x="0.00" y="2.95" width="3.400" height="2.050" fill="#1f4d97"/><rect x="4.25" y="2.95" width="3.400" height="2.050" fill="#1f4d97"/><rect x="8.50" y="2.95" width="3.400" height="2.050" fill="#1f4d97"/><rect x="0.00" y="5.90" width="3.400" height="2.050" fill="#1f4d97"/><rect x="4.25" y="5.90" width="3.400" height="2.050" fill="#1f4d97"/><rect x="8.50" y="5.90" width="3.400" height="2.050" fill="#1f4d97"/></svg></span><span class="c c-ac"><svg class="ic acc" viewBox="0 0 10.200 10.200"><circle cx="5.100" cy="5.100" r="5.100" fill="#55ab26"/><path d="M3.500 1.500H6.700L8.200 8.900H2z" fill="#fff"/><path d="M.9 5.300h8.400" stroke="#fff" stroke-width="1.100"/><path d="M5.100 1.200V9.200" stroke="#55ab26" stroke-width="1.500" stroke-dasharray="1.700 .8"/></svg></span><span class="c c-ty"><svg class="ic typ" viewBox="0 0 10.400 10.400"><circle cx="5.200" cy="5.200" r="5.200" fill="#2a5592"/><path d="M1.500 3.500L4 1.600V2.900H6.400V4.100H4V5.400z" fill="#fff"/><path d="M9 7.100L6.500 5.200V6.500H4.100V7.700H6.500V9z" fill="#fff"/></svg></span><span class="c c-in"><svg class="ic dl" viewBox="-.3 -.3 7.400 9" preserveAspectRatio="none"><path d="M2.200 0h2.400v3.200h2.200L3.400 6.300 0 3.200h2.200z" fill="#24529a"/><rect x="0" y="7.300" width="6.800" height="1" fill="#24529a"/></svg></span><span class="c c-sf"><svg class="ic flag" viewBox="0 0 11.400 8"><rect width="11.400" height="8" fill="#f7e3e3"/><rect y="0" width="11.400" height="1.100" fill="#e2504c"/><rect y="2.300" width="11.400" height="1" fill="#ee9a96"/><rect y="4.500" width="11.400" height="1" fill="#ee9a96"/><rect y="6.700" width="11.400" height="1.300" fill="#e2504c"/><rect x=".3" y=".9" width="6" height="3.800" fill="#3f62d2"/><path d="M1.200 2h.8M2.900 2h.8M4.600 2h.8M2 3.400h.8M3.800 3.400h.8" stroke="#dfe6fb" stroke-width=".7"/></svg></span><span class="c c-df"><svg class="ic flag" viewBox="0 0 11.400 8"><rect width="11.400" height="8" fill="#f7e3e3"/><rect y="0" width="11.400" height="1.100" fill="#e2504c"/><rect y="2.300" width="11.400" height="1" fill="#ee9a96"/><rect y="4.500" width="11.400" height="1" fill="#ee9a96"/><rect y="6.700" width="11.400" height="1.300" fill="#e2504c"/><rect x=".3" y=".9" width="6" height="3.800" fill="#3f62d2"/><path d="M1.200 2h.8M2.900 2h.8M4.600 2h.8M2 3.400h.8M3.800 3.400h.8" stroke="#dfe6fb" stroke-width=".7"/></svg></span></div>
<div class="tx" style="font-size:9.3px;line-height:10px;color:#606060;transform:translate(350.80px,180.91px) scaleX(0.9130);">Mar 2, 2019 10:52:21 AM</div>
<div class="tx" style="font-size:9.3px;line-height:10px;color:#606060;transform:translate(572.60px,180.91px) scaleX(0.8432);">192.100.4....</div>
<div class="abs" style="left:650.00px;top:178px;width:99.60px;height:14px;overflow:hidden"><div class="tx" style="font-size:9.3px;line-height:10px;color:#606060;transform:translate(0px,2.91px) scaleX(0.9150);">sfo03s01-in-f10.1e100.net</div></div>
<div class="row" style="top:195.08px;height:20.27px"><span class="c c-clock"><svg class="ic clock" viewBox="0 0 10 10"><circle cx="5" cy="5" r="4.100" fill="#f4f8ff" stroke="#2d5694" stroke-width="1.300"/><path d="M5 2.700V5.300H7" fill="none" stroke="#2d5694" stroke-width=".9"/></svg></span><span class="c c-bl"><svg class="ic blade" viewBox="0 0 12 8"><rect x="0.00" y="0.00" width="3.400" height="2.050" fill="#1f4d97"/><rect x="4.25" y="0.00" width="3.400" height="2.050" fill="#1f4d97"/><rect x="8.50" y="0.00" width="3.400" height="2.050" fill="#1f4d97"/><rect x="0.00" y="2.95" width="3.400" height="2.050" fill="#1f4d97"/><rect x="4.25" y="2.95" width="3.400" height="2.050" fill="#1f4d97"/><rect x="8.50" y="2.95" width="3.400" height="2.050" fill="#1f4d97"/><rect x="0.00" y="5.90" width="3.400" height="2.050" fill="#1f4d97"/><rect x="4.25" y="5.90" width="3.400" height="2.050" fill="#1f4d97"/><rect x="8.50" y="5.90" width="3.400" height="2.050" fill="#1f4d97"/></svg></span><span class="c c-ac"><svg class="ic acc" viewBox="0 0 10.200 10.200"><circle cx="5.100" cy="5.100" r="5.100" fill="#55ab26"/><path d="M3.500 1.500H6.700L8.200 8.900H2z" fill="#fff"/><path d="M.9 5.300h8.400" stroke="#fff" stroke-width="1.100"/><path d="M5.100 1.200V9.200" stroke="#55ab26" stroke-width="1.500" stroke-dasharray="1.700 .8"/></svg></span><span class="c c-ty"><svg class="ic typ" viewBox="0 0 10.400 10.400"><circle cx="5.200" cy="5.200" r="5.200" fill="#2a5592"/><path d="M1.500 3.500L4 1.600V2.900H6.400V4.100H4V5.400z" fill="#fff"/><path d="M9 7.100L6.500 5.200V6.500H4.100V7.700H6.500V9z" fill="#fff"/></svg></span><span class="c c-in"><svg class="ic dl" viewBox="-.3 -.3 7.400 9" preserveAspectRatio="none"><path d="M2.200 0h2.400v3.200h2.200L3.400 6.300 0 3.200h2.200z" fill="#24529a"/><rect x="0" y="7.300" width="6.800" height="1" fill="#24529a"/></svg></span><span class="c c-sf"><svg class="ic flag" viewBox="0 0 11.400 8"><rect width="11.400" height="8" fill="#f7e3e3"/><rect y="0" width="11.400" height="1.100" fill="#e2504c"/><rect y="2.300" width="11.400" height="1" fill="#ee9a96"/><rect y="4.500" width="11.400" height="1" fill="#ee9a96"/><rect y="6.700" width="11.400" height="1.300" fill="#e2504c"/><rect x=".3" y=".9" width="6" height="3.800" fill="#3f62d2"/><path d="M1.200 2h.8M2.900 2h.8M4.600 2h.8M2 3.400h.8M3.800 3.400h.8" stroke="#dfe6fb" stroke-width=".7"/></svg></span><span class="c c-df"><svg class="ic flag" viewBox="0 0 11.400 8"><rect width="11.400" height="8" fill="#f7e3e3"/><rect y="0" width="11.400" height="1.100" fill="#e2504c"/><rect y="2.300" width="11.400" height="1" fill="#ee9a96"/><rect y="4.500" width="11.400" height="1" fill="#ee9a96"/><rect y="6.700" width="11.400" height="1.300" fill="#e2504c"/><rect x=".3" y=".9" width="6" height="3.800" fill="#3f62d2"/><path d="M1.200 2h.8M2.900 2h.8M4.600 2h.8M2 3.400h.8M3.800 3.400h.8" stroke="#dfe6fb" stroke-width=".7"/></svg></span></div>
<div class="tx" style="font-size:9.3px;line-height:10px;color:#606060;transform:translate(350.80px,201.18px) scaleX(0.9130);">Mar 2, 2019 10:37:17 AM</div>
<div class="tx" style="font-size:9.3px;line-height:10px;color:#606060;transform:translate(572.60px,201.18px) scaleX(0.8432);">192.100.4....</div>
<div class="abs" style="left:650.00px;top:199px;width:99.60px;height:14px;overflow:hidden"><div class="tx" style="font-size:9.3px;line-height:10px;color:#606060;transform:translate(0px,2.18px) scaleX(0.9150);">sfo03s08-in-f35.1e100.net</div></div>
<div class="row alt" style="top:215.35px;height:20.27px"><span class="c c-clock"><svg class="ic clock" viewBox="0 0 10 10"><circle cx="5" cy="5" r="4.100" fill="#f4f8ff" stroke="#2d5694" stroke-width="1.300"/><path d="M5 2.700V5.300H7" fill="none" stroke="#2d5694" stroke-width=".9"/></svg></span><span class="c c-bl"><svg class="ic blade" viewBox="0 0 12 8"><rect x="0.00" y="0.00" width="3.400" height="2.050" fill="#1f4d97"/><rect x="4.25" y="0.00" width="3.400" height="2.050" fill="#1f4d97"/><rect x="8.50" y="0.00" width="3.400" height="2.050" fill="#1f4d97"/><rect x="0.00" y="2.95" width="3.400" height="2.050" fill="#1f4d97"/><rect x="4.25" y="2.95" width="3.400" height="2.050" fill="#1f4d97"/><rect x="8.50" y="2.95" width="3.400" height="2.050" fill="#1f4d97"/><rect x="0.00" y="5.90" width="3.400" height="2.050" fill="#1f4d97"/><rect x="4.25" y="5.90" width="3.400" height="2.050" fill="#1f4d97"/><rect x="8.50" y="5.90" width="3.400" height="2.050" fill="#1f4d97"/></svg></span><span class="c c-ac"><svg class="ic acc" viewBox="0 0 10.200 10.200"><circle cx="5.100" cy="5.100" r="5.100" fill="#55ab26"/><path d="M3.500 1.500H6.700L8.200 8.900H2z" fill="#fff"/><path d="M.9 5.300h8.400" stroke="#fff" stroke-width="1.100"/><path d="M5.100 1.200V9.200" stroke="#55ab26" stroke-width="1.500" stroke-dasharray="1.700 .8"/></svg></span><span class="c c-ty"><svg class="ic typ" viewBox="0 0 10.400 10.400"><circle cx="5.200" cy="5.200" r="5.200" fill="#2a5592"/><path d="M1.500 3.500L4 1.600V2.900H6.400V4.100H4V5.400z" fill="#fff"/><path d="M9 7.100L6.500 5.200V6.500H4.100V7.700H6.500V9z" fill="#fff"/></svg></span><span class="c c-in"><svg class="ic dl" viewBox="-.3 -.3 7.400 9" preserveAspectRatio="none"><path d="M2.200 0h2.400v3.200h2.200L3.400 6.300 0 3.200h2.200z" fill="#24529a"/><rect x="0" y="7.300" width="6.800" height="1" fill="#24529a"/></svg></span><span class="c c-sf"><svg class="ic flag" viewBox="0 0 11.400 8"><rect width="11.400" height="8" fill="#f7e3e3"/><rect y="0" width="11.400" height="1.100" fill="#e2504c"/><rect y="2.300" width="11.400" height="1" fill="#ee9a96"/><rect y="4.500" width="11.400" height="1" fill="#ee9a96"/><rect y="6.700" width="11.400" height="1.300" fill="#e2504c"/><rect x=".3" y=".9" width="6" height="3.800" fill="#3f62d2"/><path d="M1.200 2h.8M2.900 2h.8M4.600 2h.8M2 3.400h.8M3.800 3.400h.8" stroke="#dfe6fb" stroke-width=".7"/></svg></span><span class="c c-df"><svg class="ic flag" viewBox="0 0 11.400 8"><rect width="11.400" height="8" fill="#f7e3e3"/><rect y="0" width="11.400" height="1.100" fill="#e2504c"/><rect y="2.300" width="11.400" height="1" fill="#ee9a96"/><rect y="4.500" width="11.400" height="1" fill="#ee9a96"/><rect y="6.700" width="11.400" height="1.300" fill="#e2504c"/><rect x=".3" y=".9" width="6" height="3.800" fill="#3f62d2"/><path d="M1.200 2h.8M2.900 2h.8M4.600 2h.8M2 3.400h.8M3.800 3.400h.8" stroke="#dfe6fb" stroke-width=".7"/></svg></span></div>
<div class="tx" style="font-size:9.3px;line-height:10px;color:#606060;transform:translate(350.80px,221.45px) scaleX(0.9130);">Mar 2, 2019 10:21:59 AM</div>
<div class="tx" style="font-size:9.3px;line-height:10px;color:#606060;transform:translate(572.60px,221.45px) scaleX(0.8432);">192.100.4....</div>
<div class="abs" style="left:650.00px;top:219px;width:99.60px;height:14px;overflow:hidden"><div class="tx" style="font-size:9.3px;line-height:10px;color:#606060;transform:translate(0px,2.45px) scaleX(0.9150);">sfo03s18-in-f10.1e100.net</div></div>
<div class="row" style="top:235.62px;height:20.27px"><span class="c c-clock"><svg class="ic clock" viewBox="0 0 10 10"><circle cx="5" cy="5" r="4.100" fill="#f4f8ff" stroke="#2d5694" stroke-width="1.300"/><path d="M5 2.700V5.300H7" fill="none" stroke="#2d5694" stroke-width=".9"/></svg></span><span class="c c-bl"><svg class="ic blade" viewBox="0 0 12 8"><rect x="0.00" y="0.00" width="3.400" height="2.050" fill="#1f4d97"/><rect x="4.25" y="0.00" width="3.400" height="2.050" fill="#1f4d97"/><rect x="8.50" y="0.00" width="3.400" height="2.050" fill="#1f4d97"/><rect x="0.00" y="2.95" width="3.400" height="2.050" fill="#1f4d97"/><rect x="4.25" y="2.95" width="3.400" height="2.050" fill="#1f4d97"/><rect x="8.50" y="2.95" width="3.400" height="2.050" fill="#1f4d97"/><rect x="0.00" y="5.90" width="3.400" height="2.050" fill="#1f4d97"/><rect x="4.25" y="5.90" width="3.400" height="2.050" fill="#1f4d97"/><rect x="8.50" y="5.90" width="3.400" height="2.050" fill="#1f4d97"/></svg></span><span class="c c-ac"><svg class="ic acc" viewBox="0 0 10.200 10.200"><circle cx="5.100" cy="5.100" r="5.100" fill="#55ab26"/><path d="M3.500 1.500H6.700L8.200 8.900H2z" fill="#fff"/><path d="M.9 5.300h8.400" stroke="#fff" stroke-width="1.100"/><path d="M5.100 1.200V9.200" stroke="#55ab26" stroke-width="1.500" stroke-dasharray="1.700 .8"/></svg></span><span class="c c-ty"><svg class="ic typ" viewBox="0 0 10.400 10.400"><circle cx="5.200" cy="5.200" r="5.200" fill="#2a5592"/><path d="M1.500 3.500L4 1.600V2.900H6.400V4.100H4V5.400z" fill="#fff"/><path d="M9 7.100L6.500 5.200V6.500H4.100V7.700H6.500V9z" fill="#fff"/></svg></span><span class="c c-in"><svg class="ic dl" viewBox="-.3 -.3 7.400 9" preserveAspectRatio="none"><path d="M2.200 0h2.400v3.200h2.200L3.400 6.300 0 3.200h2.200z" fill="#24529a"/><rect x="0" y="7.300" width="6.800" height="1" fill="#24529a"/></svg></span><span class="c c-sf"><svg class="ic flag" viewBox="0 0 11.400 8"><rect width="11.400" height="8" fill="#f7e3e3"/><rect y="0" width="11.400" height="1.100" fill="#e2504c"/><rect y="2.300" width="11.400" height="1" fill="#ee9a96"/><rect y="4.500" width="11.400" height="1" fill="#ee9a96"/><rect y="6.700" width="11.400" height="1.300" fill="#e2504c"/><rect x=".3" y=".9" width="6" height="3.800" fill="#3f62d2"/><path d="M1.200 2h.8M2.900 2h.8M4.600 2h.8M2 3.400h.8M3.800 3.400h.8" stroke="#dfe6fb" stroke-width=".7"/></svg></span><span class="c c-df"><svg class="ic flag" viewBox="0 0 11.400 8"><rect width="11.400" height="8" fill="#f7e3e3"/><rect y="0" width="11.400" height="1.100" fill="#e2504c"/><rect y="2.300" width="11.400" height="1" fill="#ee9a96"/><rect y="4.500" width="11.400" height="1" fill="#ee9a96"/><rect y="6.700" width="11.400" height="1.300" fill="#e2504c"/><rect x=".3" y=".9" width="6" height="3.800" fill="#3f62d2"/><path d="M1.200 2h.8M2.900 2h.8M4.600 2h.8M2 3.400h.8M3.800 3.400h.8" stroke="#dfe6fb" stroke-width=".7"/></svg></span></div>
<div class="tx" style="font-size:9.3px;line-height:10px;color:#606060;transform:translate(350.80px,241.72px) scaleX(0.9130);">Mar 2, 2019 10:07:16 AM</div>
<div class="tx" style="font-size:9.3px;line-height:10px;color:#606060;transform:translate(572.60px,241.72px) scaleX(0.8432);">192.100.4....</div>
<div class="abs" style="left:650.00px;top:239px;width:99.60px;height:14px;overflow:hidden"><div class="tx" style="font-size:9.3px;line-height:10px;color:#606060;transform:translate(0px,2.72px) scaleX(0.9150);">sfo03s18-in-f3.1e100.net (2...</div></div>
<div class="row alt" style="top:255.89px;height:20.27px"><span class="c c-clock"><svg class="ic clock" viewBox="0 0 10 10"><circle cx="5" cy="5" r="4.100" fill="#f4f8ff" stroke="#2d5694" stroke-width="1.300"/><path d="M5 2.700V5.300H7" fill="none" stroke="#2d5694" stroke-width=".9"/></svg></span><span class="c c-bl"><svg class="ic blade" viewBox="0 0 12 8"><rect x="0.00" y="0.00" width="3.400" height="2.050" fill="#1f4d97"/><rect x="4.25" y="0.00" width="3.400" height="2.050" fill="#1f4d97"/><rect x="8.50" y="0.00" width="3.400" height="2.050" fill="#1f4d97"/><rect x="0.00" y="2.95" width="3.400" height="2.050" fill="#1f4d97"/><rect x="4.25" y="2.95" width="3.400" height="2.050" fill="#1f4d97"/><rect x="8.50" y="2.95" width="3.400" height="2.050" fill="#1f4d97"/><rect x="0.00" y="5.90" width="3.400" height="2.050" fill="#1f4d97"/><rect x="4.25" y="5.90" width="3.400" height="2.050" fill="#1f4d97"/><rect x="8.50" y="5.90" width="3.400" height="2.050" fill="#1f4d97"/></svg></span><span class="c c-ac"><svg class="ic acc" viewBox="0 0 10.200 10.200"><circle cx="5.100" cy="5.100" r="5.100" fill="#55ab26"/><path d="M3.500 1.500H6.700L8.200 8.900H2z" fill="#fff"/><path d="M.9 5.300h8.400" stroke="#fff" stroke-width="1.100"/><path d="M5.100 1.200V9.200" stroke="#55ab26" stroke-width="1.500" stroke-dasharray="1.700 .8"/></svg></span><span class="c c-ty"><svg class="ic typ" viewBox="0 0 10.400 10.400"><circle cx="5.200" cy="5.200" r="5.200" fill="#2a5592"/><path d="M1.500 3.500L4 1.600V2.900H6.400V4.100H4V5.400z" fill="#fff"/><path d="M9 7.100L6.500 5.200V6.500H4.100V7.700H6.500V9z" fill="#fff"/></svg></span><span class="c c-in"><svg class="ic dl" viewBox="-.3 -.3 7.400 9" preserveAspectRatio="none"><path d="M2.200 0h2.400v3.200h2.200L3.400 6.300 0 3.200h2.200z" fill="#24529a"/><rect x="0" y="7.300" width="6.800" height="1" fill="#24529a"/></svg></span><span class="c c-sf"><svg class="ic flag" viewBox="0 0 11.400 8"><rect width="11.400" height="8" fill="#f7e3e3"/><rect y="0" width="11.400" height="1.100" fill="#e2504c"/><rect y="2.300" width="11.400" height="1" fill="#ee9a96"/><rect y="4.500" width="11.400" height="1" fill="#ee9a96"/><rect y="6.700" width="11.400" height="1.300" fill="#e2504c"/><rect x=".3" y=".9" width="6" height="3.800" fill="#3f62d2"/><path d="M1.200 2h.8M2.900 2h.8M4.600 2h.8M2 3.400h.8M3.800 3.400h.8" stroke="#dfe6fb" stroke-width=".7"/></svg></span><span class="c c-df"><svg class="ic flag" viewBox="0 0 11.400 8"><rect width="11.400" height="8" fill="#f7e3e3"/><rect y="0" width="11.400" height="1.100" fill="#e2504c"/><rect y="2.300" width="11.400" height="1" fill="#ee9a96"/><rect y="4.500" width="11.400" height="1" fill="#ee9a96"/><rect y="6.700" width="11.400" height="1.300" fill="#e2504c"/><rect x=".3" y=".9" width="6" height="3.800" fill="#3f62d2"/><path d="M1.200 2h.8M2.900 2h.8M4.600 2h.8M2 3.400h.8M3.800 3.400h.8" stroke="#dfe6fb" stroke-width=".7"/></svg></span></div>
<div class="tx" style="font-size:9.3px;line-height:10px;color:#606060;transform:translate(350.80px,261.99px) scaleX(0.9130);">Mar 2, 2019 9:56:54 AM</div>
<div class="tx" style="font-size:9.3px;line-height:10px;color:#606060;transform:translate(572.60px,261.99px) scaleX(0.8432);">192.100.4....</div>
<div class="abs" style="left:650.00px;top:259px;width:99.60px;height:14px;overflow:hidden"><div class="tx" style="font-size:9.3px;line-height:10px;color:#606060;transform:translate(0px,2.99px) scaleX(0.9150);">sea15s07-in-f78.1e100.net</div></div>
<div class="row" style="top:276.16px;height:20.27px"><span class="c c-clock"><svg class="ic clock" viewBox="0 0 10 10"><circle cx="5" cy="5" r="4.100" fill="#f4f8ff" stroke="#2d5694" stroke-width="1.300"/><path d="M5 2.700V5.300H7" fill="none" stroke="#2d5694" stroke-width=".9"/></svg></span><span class="c c-bl"><svg class="ic blade" viewBox="0 0 12 8"><rect x="0.00" y="0.00" width="3.400" height="2.050" fill="#1f4d97"/><rect x="4.25" y="0.00" width="3.400" height="2.050" fill="#1f4d97"/><rect x="8.50" y="0.00" width="3.400" height="2.050" fill="#1f4d97"/><rect x="0.00" y="2.95" width="3.400" height="2.050" fill="#1f4d97"/><rect x="4.25" y="2.95" width="3.400" height="2.050" fill="#1f4d97"/><rect x="8.50" y="2.95" width="3.400" height="2.050" fill="#1f4d97"/><rect x="0.00" y="5.90" width="3.400" height="2.050" fill="#1f4d97"/><rect x="4.25" y="5.90" width="3.400" height="2.050" fill="#1f4d97"/><rect x="8.50" y="5.90" width="3.400" height="2.050" fill="#1f4d97"/></svg></span><span class="c c-ac"><svg class="ic acc" viewBox="0 0 10.200 10.200"><circle cx="5.100" cy="5.100" r="5.100" fill="#55ab26"/><path d="M3.500 1.500H6.700L8.200 8.900H2z" fill="#fff"/><path d="M.9 5.300h8.400" stroke="#fff" stroke-width="1.100"/><path d="M5.100 1.200V9.200" stroke="#55ab26" stroke-width="1.500" stroke-dasharray="1.700 .8"/></svg></span><span class="c c-ty"><svg class="ic typ" viewBox="0 0 10.400 10.400"><circle cx="5.200" cy="5.200" r="5.200" fill="#2a5592"/><path d="M1.500 3.500L4 1.600V2.900H6.400V4.100H4V5.400z" fill="#fff"/><path d="M9 7.100L6.500 5.200V6.500H4.100V7.700H6.500V9z" fill="#fff"/></svg></span><span class="c c-in"><svg class="ic dl" viewBox="-.3 -.3 7.400 9" preserveAspectRatio="none"><path d="M2.200 0h2.400v3.200h2.200L3.400 6.300 0 3.200h2.200z" fill="#24529a"/><rect x="0" y="7.300" width="6.800" height="1" fill="#24529a"/></svg></span><span class="c c-sf"><svg class="ic flag" viewBox="0 0 11.400 8"><rect width="11.400" height="8" fill="#f7e3e3"/><rect y="0" width="11.400" height="1.100" fill="#e2504c"/><rect y="2.300" width="11.400" height="1" fill="#ee9a96"/><rect y="4.500" width="11.400" height="1" fill="#ee9a96"/><rect y="6.700" width="11.400" height="1.300" fill="#e2504c"/><rect x=".3" y=".9" width="6" height="3.800" fill="#3f62d2"/><path d="M1.200 2h.8M2.900 2h.8M4.600 2h.8M2 3.400h.8M3.800 3.400h.8" stroke="#dfe6fb" stroke-width=".7"/></svg></span><span class="c c-df"><svg class="ic flag" viewBox="0 0 11.400 8"><rect width="11.400" height="8" fill="#f7e3e3"/><rect y="0" width="11.400" height="1.100" fill="#e2504c"/><rect y="2.300" width="11.400" height="1" fill="#ee9a96"/><rect y="4.500" width="11.400" height="1" fill="#ee9a96"/><rect y="6.700" width="11.400" height="1.300" fill="#e2504c"/><rect x=".3" y=".9" width="6" height="3.800" fill="#3f62d2"/><path d="M1.200 2h.8M2.900 2h.8M4.600 2h.8M2 3.400h.8M3.800 3.400h.8" stroke="#dfe6fb" stroke-width=".7"/></svg></span></div>
<div class="tx" style="font-size:9.3px;line-height:10px;color:#606060;transform:translate(350.80px,282.26px) scaleX(0.9130);">Mar 2, 2019 9:37:16 AM</div>
<div class="tx" style="font-size:9.3px;line-height:10px;color:#606060;transform:translate(572.60px,282.26px) scaleX(0.8432);">192.100.4....</div>
<div class="abs" style="left:650.00px;top:280px;width:99.60px;height:14px;overflow:hidden"><div class="tx" style="font-size:9.3px;line-height:10px;color:#606060;transform:translate(0px,2.26px) scaleX(0.9150);">nuq04s29-in-f3.1e100.net</div></div>
<div class="row alt" style="top:296.43px;height:20.27px"><span class="c c-clock"><svg class="ic clock" viewBox="0 0 10 10"><circle cx="5" cy="5" r="4.100" fill="#f4f8ff" stroke="#2d5694" stroke-width="1.300"/><path d="M5 2.700V5.300H7" fill="none" stroke="#2d5694" stroke-width=".9"/></svg></span><span class="c c-bl"><svg class="ic blade" viewBox="0 0 12 8"><rect x="0.00" y="0.00" width="3.400" height="2.050" fill="#1f4d97"/><rect x="4.25" y="0.00" width="3.400" height="2.050" fill="#1f4d97"/><rect x="8.50" y="0.00" width="3.400" height="2.050" fill="#1f4d97"/><rect x="0.00" y="2.95" width="3.400" height="2.050" fill="#1f4d97"/><rect x="4.25" y="2.95" width="3.400" height="2.050" fill="#1f4d97"/><rect x="8.50" y="2.95" width="3.400" height="2.050" fill="#1f4d97"/><rect x="0.00" y="5.90" width="3.400" height="2.050" fill="#1f4d97"/><rect x="4.25" y="5.90" width="3.400" height="2.050" fill="#1f4d97"/><rect x="8.50" y="5.90" width="3.400" height="2.050" fill="#1f4d97"/></svg></span><span class="c c-ac"><svg class="ic acc" viewBox="0 0 10.200 10.200"><circle cx="5.100" cy="5.100" r="5.100" fill="#55ab26"/><path d="M3.500 1.500H6.700L8.200 8.900H2z" fill="#fff"/><path d="M.9 5.300h8.400" stroke="#fff" stroke-width="1.100"/><path d="M5.100 1.200V9.200" stroke="#55ab26" stroke-width="1.500" stroke-dasharray="1.700 .8"/></svg></span><span class="c c-ty"><svg class="ic typ" viewBox="0 0 10.400 10.400"><circle cx="5.200" cy="5.200" r="5.200" fill="#2a5592"/><path d="M1.500 3.500L4 1.600V2.900H6.400V4.100H4V5.400z" fill="#fff"/><path d="M9 7.100L6.500 5.200V6.500H4.100V7.700H6.500V9z" fill="#fff"/></svg></span><span class="c c-in"><svg class="ic dl" viewBox="-.3 -.3 7.400 9" preserveAspectRatio="none"><path d="M2.200 0h2.400v3.200h2.200L3.400 6.300 0 3.200h2.200z" fill="#24529a"/><rect x="0" y="7.300" width="6.800" height="1" fill="#24529a"/></svg></span><span class="c c-sf"><svg class="ic flag" viewBox="0 0 11.400 8"><rect width="11.400" height="8" fill="#f7e3e3"/><rect y="0" width="11.400" height="1.100" fill="#e2504c"/><rect y="2.300" width="11.400" height="1" fill="#ee9a96"/><rect y="4.500" width="11.400" height="1" fill="#ee9a96"/><rect y="6.700" width="11.400" height="1.300" fill="#e2504c"/><rect x=".3" y=".9" width="6" height="3.800" fill="#3f62d2"/><path d="M1.200 2h.8M2.900 2h.8M4.600 2h.8M2 3.400h.8M3.800 3.400h.8" stroke="#dfe6fb" stroke-width=".7"/></svg></span><span class="c c-df"><svg class="ic flag" viewBox="0 0 11.400 8"><rect width="11.400" height="8" fill="#f7e3e3"/><rect y="0" width="11.400" height="1.100" fill="#e2504c"/><rect y="2.300" width="11.400" height="1" fill="#ee9a96"/><rect y="4.500" width="11.400" height="1" fill="#ee9a96"/><rect y="6.700" width="11.400" height="1.300" fill="#e2504c"/><rect x=".3" y=".9" width="6" height="3.800" fill="#3f62d2"/><path d="M1.200 2h.8M2.900 2h.8M4.600 2h.8M2 3.400h.8M3.800 3.400h.8" stroke="#dfe6fb" stroke-width=".7"/></svg></span></div>
<div class="tx" style="font-size:9.3px;line-height:10px;color:#606060;transform:translate(350.80px,302.53px) scaleX(0.9130);">Mar 2, 2019 9:22:31 AM</div>
<div class="tx" style="font-size:9.3px;line-height:10px;color:#606060;transform:translate(572.60px,302.53px) scaleX(0.8432);">192.100.4....</div>
<div class="abs" style="left:650.00px;top:300px;width:99.60px;height:14px;overflow:hidden"><div class="tx" style="font-size:9.3px;line-height:10px;color:#606060;transform:translate(0px,2.53px) scaleX(0.9150);">sfo03s07-in-f106.1e100.net</div></div>
<div class="row" style="top:316.70px;height:20.27px"><span class="c c-clock"><svg class="ic clock" viewBox="0 0 10 10"><circle cx="5" cy="5" r="4.100" fill="#f4f8ff" stroke="#2d5694" stroke-width="1.300"/><path d="M5 2.700V5.300H7" fill="none" stroke="#2d5694" stroke-width=".9"/></svg></span><span class="c c-bl"><svg class="ic blade" viewBox="0 0 12 8"><rect x="0.00" y="0.00" width="3.400" height="2.050" fill="#1f4d97"/><rect x="4.25" y="0.00" width="3.400" height="2.050" fill="#1f4d97"/><rect x="8.50" y="0.00" width="3.400" height="2.050" fill="#1f4d97"/><rect x="0.00" y="2.95" width="3.400" height="2.050" fill="#1f4d97"/><rect x="4.25" y="2.95" width="3.400" height="2.050" fill="#1f4d97"/><rect x="8.50" y="2.95" width="3.400" height="2.050" fill="#1f4d97"/><rect x="0.00" y="5.90" width="3.400" height="2.050" fill="#1f4d97"/><rect x="4.25" y="5.90" width="3.400" height="2.050" fill="#1f4d97"/><rect x="8.50" y="5.90" width="3.400" height="2.050" fill="#1f4d97"/></svg></span><span class="c c-ac"><svg class="ic acc" viewBox="0 0 10.200 10.200"><circle cx="5.100" cy="5.100" r="5.100" fill="#55ab26"/><path d="M3.500 1.500H6.700L8.200 8.900H2z" fill="#fff"/><path d="M.9 5.300h8.400" stroke="#fff" stroke-width="1.100"/><path d="M5.100 1.200V9.200" stroke="#55ab26" stroke-width="1.500" stroke-dasharray="1.700 .8"/></svg></span><span class="c c-ty"><svg class="ic typ" viewBox="0 0 10.400 10.400"><circle cx="5.200" cy="5.200" r="5.200" fill="#2a5592"/><path d="M1.500 3.500L4 1.600V2.900H6.400V4.100H4V5.400z" fill="#fff"/><path d="M9 7.100L6.500 5.200V6.500H4.100V7.700H6.500V9z" fill="#fff"/></svg></span><span class="c c-in"><svg class="ic dl" viewBox="-.3 -.3 7.400 9" preserveAspectRatio="none"><path d="M2.200 0h2.400v3.200h2.200L3.400 6.300 0 3.200h2.200z" fill="#24529a"/><rect x="0" y="7.300" width="6.800" height="1" fill="#24529a"/></svg></span><span class="c c-sf"><svg class="ic flag" viewBox="0 0 11.400 8"><rect width="11.400" height="8" fill="#f7e3e3"/><rect y="0" width="11.400" height="1.100" fill="#e2504c"/><rect y="2.300" width="11.400" height="1" fill="#ee9a96"/><rect y="4.500" width="11.400" height="1" fill="#ee9a96"/><rect y="6.700" width="11.400" height="1.300" fill="#e2504c"/><rect x=".3" y=".9" width="6" height="3.800" fill="#3f62d2"/><path d="M1.200 2h.8M2.900 2h.8M4.600 2h.8M2 3.400h.8M3.800 3.400h.8" stroke="#dfe6fb" stroke-width=".7"/></svg></span><span class="c c-df"><svg class="ic flag" viewBox="0 0 11.400 8"><rect width="11.400" height="8" fill="#f7e3e3"/><rect y="0" width="11.400" height="1.100" fill="#e2504c"/><rect y="2.300" width="11.400" height="1" fill="#ee9a96"/><rect y="4.500" width="11.400" height="1" fill="#ee9a96"/><rect y="6.700" width="11.400" height="1.300" fill="#e2504c"/><rect x=".3" y=".9" width="6" height="3.800" fill="#3f62d2"/><path d="M1.200 2h.8M2.900 2h.8M4.600 2h.8M2 3.400h.8M3.800 3.400h.8" stroke="#dfe6fb" stroke-width=".7"/></svg></span></div>
<div class="tx" style="font-size:9.3px;line-height:10px;color:#606060;transform:translate(350.80px,322.80px) scaleX(0.9130);">Mar 2, 2019 9:06:02 AM</div>
<div class="tx" style="font-size:9.3px;line-height:10px;color:#606060;transform:translate(572.60px,322.80px) scaleX(0.8432);">192.100.4....</div>
<div class="abs" style="left:650.00px;top:320px;width:99.60px;height:14px;overflow:hidden"><div class="tx" style="font-size:9.3px;line-height:10px;color:#606060;transform:translate(0px,2.80px) scaleX(0.9150);">sea15s11-in-f174.1e100.net</div></div>
<div class="row alt" style="top:336.97px;height:20.27px"><span class="c c-clock"><svg class="ic clock" viewBox="0 0 10 10"><circle cx="5" cy="5" r="4.100" fill="#f4f8ff" stroke="#2d5694" stroke-width="1.300"/><path d="M5 2.700V5.300H7" fill="none" stroke="#2d5694" stroke-width=".9"/></svg></span><span class="c c-bl"><svg class="ic blade" viewBox="0 0 12 8"><rect x="0.00" y="0.00" width="3.400" height="2.050" fill="#1f4d97"/><rect x="4.25" y="0.00" width="3.400" height="2.050" fill="#1f4d97"/><rect x="8.50" y="0.00" width="3.400" height="2.050" fill="#1f4d97"/><rect x="0.00" y="2.95" width="3.400" height="2.050" fill="#1f4d97"/><rect x="4.25" y="2.95" width="3.400" height="2.050" fill="#1f4d97"/><rect x="8.50" y="2.95" width="3.400" height="2.050" fill="#1f4d97"/><rect x="0.00" y="5.90" width="3.400" height="2.050" fill="#1f4d97"/><rect x="4.25" y="5.90" width="3.400" height="2.050" fill="#1f4d97"/><rect x="8.50" y="5.90" width="3.400" height="2.050" fill="#1f4d97"/></svg></span><span class="c c-ac"><svg class="ic acc" viewBox="0 0 10.200 10.200"><circle cx="5.100" cy="5.100" r="5.100" fill="#55ab26"/><path d="M3.500 1.500H6.700L8.200 8.900H2z" fill="#fff"/><path d="M.9 5.300h8.400" stroke="#fff" stroke-width="1.100"/><path d="M5.100 1.200V9.200" stroke="#55ab26" stroke-width="1.500" stroke-dasharray="1.700 .8"/></svg></span><span class="c c-ty"><svg class="ic typ" viewBox="0 0 10.400 10.400"><circle cx="5.200" cy="5.200" r="5.200" fill="#2a5592"/><path d="M1.500 3.500L4 1.600V2.900H6.400V4.100H4V5.400z" fill="#fff"/><path d="M9 7.100L6.500 5.200V6.500H4.100V7.700H6.500V9z" fill="#fff"/></svg></span><span class="c c-in"><svg class="ic dl" viewBox="-.3 -.3 7.400 9" preserveAspectRatio="none"><path d="M2.200 0h2.400v3.200h2.200L3.400 6.300 0 3.200h2.200z" fill="#24529a"/><rect x="0" y="7.300" width="6.800" height="1" fill="#24529a"/></svg></span><span class="c c-sf"><svg class="ic flag" viewBox="0 0 11.400 8"><rect width="11.400" height="8" fill="#f7e3e3"/><rect y="0" width="11.400" height="1.100" fill="#e2504c"/><rect y="2.300" width="11.400" height="1" fill="#ee9a96"/><rect y="4.500" width="11.400" height="1" fill="#ee9a96"/><rect y="6.700" width="11.400" height="1.300" fill="#e2504c"/><rect x=".3" y=".9" width="6" height="3.800" fill="#3f62d2"/><path d="M1.200 2h.8M2.900 2h.8M4.600 2h.8M2 3.400h.8M3.800 3.400h.8" stroke="#dfe6fb" stroke-width=".7"/></svg></span><span class="c c-df"><svg class="ic flag" viewBox="0 0 11.400 8"><rect width="11.400" height="8" fill="#f7e3e3"/><rect y="0" width="11.400" height="1.100" fill="#e2504c"/><rect y="2.300" width="11.400" height="1" fill="#ee9a96"/><rect y="4.500" width="11.400" height="1" fill="#ee9a96"/><rect y="6.700" width="11.400" height="1.300" fill="#e2504c"/><rect x=".3" y=".9" width="6" height="3.800" fill="#3f62d2"/><path d="M1.200 2h.8M2.900 2h.8M4.600 2h.8M2 3.400h.8M3.800 3.400h.8" stroke="#dfe6fb" stroke-width=".7"/></svg></span></div>
<div class="tx" style="font-size:9.3px;line-height:10px;color:#606060;transform:translate(350.80px,343.07px) scaleX(0.9130);">Mar 2, 2019 9:00:05 AM</div>
<div class="tx" style="font-size:9.3px;line-height:10px;color:#606060;transform:translate(572.60px,343.07px) scaleX(0.8432);">192.100.4....</div>
<div class="abs" style="left:650.00px;top:341px;width:99.60px;height:14px;overflow:hidden"><div class="tx" style="font-size:9.3px;line-height:10px;color:#606060;transform:translate(0px,2.07px) scaleX(0.9150);">sfo03s07-in-f110.1e100.net</div></div>
<div class="row" style="top:357.24px;height:20.27px"><span class="c c-clock"><svg class="ic clock" viewBox="0 0 10 10"><circle cx="5" cy="5" r="4.100" fill="#f4f8ff" stroke="#2d5694" stroke-width="1.300"/><path d="M5 2.700V5.300H7" fill="none" stroke="#2d5694" stroke-width=".9"/></svg></span><span class="c c-bl"><svg class="ic blade" viewBox="0 0 12 8"><rect x="0.00" y="0.00" width="3.400" height="2.050" fill="#1f4d97"/><rect x="4.25" y="0.00" width="3.400" height="2.050" fill="#1f4d97"/><rect x="8.50" y="0.00" width="3.400" height="2.050" fill="#1f4d97"/><rect x="0.00" y="2.95" width="3.400" height="2.050" fill="#1f4d97"/><rect x="4.25" y="2.95" width="3.400" height="2.050" fill="#1f4d97"/><rect x="8.50" y="2.95" width="3.400" height="2.050" fill="#1f4d97"/><rect x="0.00" y="5.90" width="3.400" height="2.050" fill="#1f4d97"/><rect x="4.25" y="5.90" width="3.400" height="2.050" fill="#1f4d97"/><rect x="8.50" y="5.90" width="3.400" height="2.050" fill="#1f4d97"/></svg></span><span class="c c-ac"><svg class="ic acc" viewBox="0 0 10.200 10.200"><circle cx="5.100" cy="5.100" r="5.100" fill="#55ab26"/><path d="M3.500 1.500H6.700L8.200 8.900H2z" fill="#fff"/><path d="M.9 5.300h8.400" stroke="#fff" stroke-width="1.100"/><path d="M5.100 1.200V9.200" stroke="#55ab26" stroke-width="1.500" stroke-dasharray="1.700 .8"/></svg></span><span class="c c-ty"><svg class="ic typ" viewBox="0 0 10.400 10.400"><circle cx="5.200" cy="5.200" r="5.200" fill="#2a5592"/><path d="M1.500 3.500L4 1.600V2.900H6.400V4.100H4V5.400z" fill="#fff"/><path d="M9 7.100L6.500 5.200V6.500H4.100V7.700H6.500V9z" fill="#fff"/></svg></span><span class="c c-in"><svg class="ic dl" viewBox="-.3 -.3 7.400 9" preserveAspectRatio="none"><path d="M2.200 0h2.400v3.200h2.200L3.400 6.300 0 3.200h2.200z" fill="#24529a"/><rect x="0" y="7.300" width="6.800" height="1" fill="#24529a"/></svg></span><span class="c c-sf"><svg class="ic flag" viewBox="0 0 11.400 8"><rect width="11.400" height="8" fill="#f7e3e3"/><rect y="0" width="11.400" height="1.100" fill="#e2504c"/><rect y="2.300" width="11.400" height="1" fill="#ee9a96"/><rect y="4.500" width="11.400" height="1" fill="#ee9a96"/><rect y="6.700" width="11.400" height="1.300" fill="#e2504c"/><rect x=".3" y=".9" width="6" height="3.800" fill="#3f62d2"/><path d="M1.200 2h.8M2.900 2h.8M4.600 2h.8M2 3.400h.8M3.800 3.400h.8" stroke="#dfe6fb" stroke-width=".7"/></svg></span><span class="c c-df"><svg class="ic flag" viewBox="0 0 11.400 8"><rect width="11.400" height="8" fill="#f7e3e3"/><rect y="0" width="11.400" height="1.100" fill="#e2504c"/><rect y="2.300" width="11.400" height="1" fill="#ee9a96"/><rect y="4.500" width="11.400" height="1" fill="#ee9a96"/><rect y="6.700" width="11.400" height="1.300" fill="#e2504c"/><rect x=".3" y=".9" width="6" height="3.800" fill="#3f62d2"/><path d="M1.200 2h.8M2.900 2h.8M4.600 2h.8M2 3.400h.8M3.800 3.400h.8" stroke="#dfe6fb" stroke-width=".7"/></svg></span></div>
<div class="tx" style="font-size:9.3px;line-height:10px;color:#606060;transform:translate(350.80px,363.34px) scaleX(0.9130);">Mar 2, 2019 8:58:33 AM</div>
<div class="tx" style="font-size:9.3px;line-height:10px;color:#606060;transform:translate(572.60px,363.34px) scaleX(0.8432);">192.100.4....</div>
<div class="abs" style="left:650.00px;top:361px;width:99.60px;height:14px;overflow:hidden"><div class="tx" style="font-size:9.3px;line-height:10px;color:#606060;transform:translate(0px,2.34px) scaleX(0.9150);">sfo03s01-in-f195.1e100.net</div></div>
<div class="row alt" style="top:377.51px;height:20.27px"><span class="c c-clock"><svg class="ic clock" viewBox="0 0 10 10"><circle cx="5" cy="5" r="4.100" fill="#f4f8ff" stroke="#2d5694" stroke-width="1.300"/><path d="M5 2.700V5.300H7" fill="none" stroke="#2d5694" stroke-width=".9"/></svg></span><span class="c c-bl"><svg class="ic blade" viewBox="0 0 12 8"><rect x="0.00" y="0.00" width="3.400" height="2.050" fill="#1f4d97"/><rect x="4.25" y="0.00" width="3.400" height="2.050" fill="#1f4d97"/><rect x="8.50" y="0.00" width="3.400" height="2.050" fill="#1f4d97"/><rect x="0.00" y="2.95" width="3.400" height="2.050" fill="#1f4d97"/><rect x="4.25" y="2.95" width="3.400" height="2.050" fill="#1f4d97"/><rect x="8.50" y="2.95" width="3.400" height="2.050" fill="#1f4d97"/><rect x="0.00" y="5.90" width="3.400" height="2.050" fill="#1f4d97"/><rect x="4.25" y="5.90" width="3.400" height="2.050" fill="#1f4d97"/><rect x="8.50" y="5.90" width="3.400" height="2.050" fill="#1f4d97"/></svg></span><span class="c c-ac"><svg class="ic acc" viewBox="0 0 10.200 10.200"><circle cx="5.100" cy="5.100" r="5.100" fill="#55ab26"/><path d="M3.500 1.500H6.700L8.200 8.900H2z" fill="#fff"/><path d="M.9 5.300h8.400" stroke="#fff" stroke-width="1.100"/><path d="M5.100 1.200V9.200" stroke="#55ab26" stroke-width="1.500" stroke-dasharray="1.700 .8"/></svg></span><span class="c c-ty"><svg class="ic typ" viewBox="0 0 10.400 10.400"><circle cx="5.200" cy="5.200" r="5.200" fill="#2a5592"/><path d="M1.500 3.500L4 1.600V2.900H6.400V4.100H4V5.400z" fill="#fff"/><path d="M9 7.100L6.500 5.200V6.500H4.100V7.700H6.500V9z" fill="#fff"/></svg></span><span class="c c-in"><svg class="ic dl" viewBox="-.3 -.3 7.400 9" preserveAspectRatio="none"><path d="M2.200 0h2.400v3.200h2.200L3.400 6.300 0 3.200h2.200z" fill="#24529a"/><rect x="0" y="7.300" width="6.800" height="1" fill="#24529a"/></svg></span><span class="c c-sf"><svg class="ic flag" viewBox="0 0 11.400 8"><rect width="11.400" height="8" fill="#f7e3e3"/><rect y="0" width="11.400" height="1.100" fill="#e2504c"/><rect y="2.300" width="11.400" height="1" fill="#ee9a96"/><rect y="4.500" width="11.400" height="1" fill="#ee9a96"/><rect y="6.700" width="11.400" height="1.300" fill="#e2504c"/><rect x=".3" y=".9" width="6" height="3.800" fill="#3f62d2"/><path d="M1.200 2h.8M2.900 2h.8M4.600 2h.8M2 3.400h.8M3.800 3.400h.8" stroke="#dfe6fb" stroke-width=".7"/></svg></span><span class="c c-df"><svg class="ic flag" viewBox="0 0 11.400 8"><rect width="11.400" height="8" fill="#f7e3e3"/><rect y="0" width="11.400" height="1.100" fill="#e2504c"/><rect y="2.300" width="11.400" height="1" fill="#ee9a96"/><rect y="4.500" width="11.400" height="1" fill="#ee9a96"/><rect y="6.700" width="11.400" height="1.300" fill="#e2504c"/><rect x=".3" y=".9" width="6" height="3.800" fill="#3f62d2"/><path d="M1.200 2h.8M2.900 2h.8M4.600 2h.8M2 3.400h.8M3.800 3.400h.8" stroke="#dfe6fb" stroke-width=".7"/></svg></span></div>
<div class="tx" style="font-size:9.3px;line-height:10px;color:#606060;transform:translate(350.80px,383.61px) scaleX(0.9130);">Mar 2, 2019 8:57:50 AM</div>
<div class="tx" style="font-size:9.3px;line-height:10px;color:#606060;transform:translate(572.60px,383.61px) scaleX(0.8432);">192.100.4....</div>
<div class="abs" style="left:650.00px;top:381px;width:99.60px;height:14px;overflow:hidden"><div class="tx" style="font-size:9.3px;line-height:10px;color:#606060;transform:translate(0px,2.61px) scaleX(0.9150);">sfo07s17-in-f67.1e100.net</div></div>
<div class="row" style="top:397.78px;height:20.27px"><span class="c c-clock"><svg class="ic clock" viewBox="0 0 10 10"><circle cx="5" cy="5" r="4.100" fill="#f4f8ff" stroke="#2d5694" stroke-width="1.300"/><path d="M5 2.700V5.300H7" fill="none" stroke="#2d5694" stroke-width=".9"/></svg></span><span class="c c-bl"><svg class="ic blade" viewBox="0 0 12 8"><rect x="0.00" y="0.00" width="3.400" height="2.050" fill="#1f4d97"/><rect x="4.25" y="0.00" width="3.400" height="2.050" fill="#1f4d97"/><rect x="8.50" y="0.00" width="3.400" height="2.050" fill="#1f4d97"/><rect x="0.00" y="2.95" width="3.400" height="2.050" fill="#1f4d97"/><rect x="4.25" y="2.95" width="3.400" height="2.050" fill="#1f4d97"/><rect x="8.50" y="2.95" width="3.400" height="2.050" fill="#1f4d97"/><rect x="0.00" y="5.90" width="3.400" height="2.050" fill="#1f4d97"/><rect x="4.25" y="5.90" width="3.400" height="2.050" fill="#1f4d97"/><rect x="8.50" y="5.90" width="3.400" height="2.050" fill="#1f4d97"/></svg></span><span class="c c-ac"><svg class="ic acc" viewBox="0 0 10.200 10.200"><circle cx="5.100" cy="5.100" r="5.100" fill="#55ab26"/><path d="M3.500 1.500H6.700L8.200 8.900H2z" fill="#fff"/><path d="M.9 5.300h8.400" stroke="#fff" stroke-width="1.100"/><path d="M5.100 1.200V9.200" stroke="#55ab26" stroke-width="1.500" stroke-dasharray="1.700 .8"/></svg></span><span class="c c-ty"><svg class="ic typ" viewBox="0 0 10.400 10.400"><circle cx="5.200" cy="5.200" r="5.200" fill="#2a5592"/><path d="M1.500 3.500L4 1.600V2.900H6.400V4.100H4V5.400z" fill="#fff"/><path d="M9 7.100L6.500 5.200V6.500H4.100V7.700H6.500V9z" fill="#fff"/></svg></span><span class="c c-in"><svg class="ic dl" viewBox="-.3 -.3 7.400 9" preserveAspectRatio="none"><path d="M2.200 0h2.400v3.200h2.200L3.400 6.300 0 3.200h2.200z" fill="#24529a"/><rect x="0" y="7.300" width="6.800" height="1" fill="#24529a"/></svg></span><span class="c c-sf"><svg class="ic flag" viewBox="0 0 11.400 8"><rect width="11.400" height="8" fill="#f7e3e3"/><rect y="0" width="11.400" height="1.100" fill="#e2504c"/><rect y="2.300" width="11.400" height="1" fill="#ee9a96"/><rect y="4.500" width="11.400" height="1" fill="#ee9a96"/><rect y="6.700" width="11.400" height="1.300" fill="#e2504c"/><rect x=".3" y=".9" width="6" height="3.800" fill="#3f62d2"/><path d="M1.200 2h.8M2.900 2h.8M4.600 2h.8M2 3.400h.8M3.800 3.400h.8" stroke="#dfe6fb" stroke-width=".7"/></svg></span><span class="c c-df"><svg class="ic flag" viewBox="0 0 11.400 8"><rect width="11.400" height="8" fill="#f7e3e3"/><rect y="0" width="11.400" height="1.100" fill="#e2504c"/><rect y="2.300" width="11.400" height="1" fill="#ee9a96"/><rect y="4.500" width="11.400" height="1" fill="#ee9a96"/><rect y="6.700" width="11.400" height="1.300" fill="#e2504c"/><rect x=".3" y=".9" width="6" height="3.800" fill="#3f62d2"/><path d="M1.200 2h.8M2.900 2h.8M4.600 2h.8M2 3.400h.8M3.800 3.400h.8" stroke="#dfe6fb" stroke-width=".7"/></svg></span></div>
<div class="tx" style="font-size:9.3px;line-height:10px;color:#606060;transform:translate(350.80px,403.88px) scaleX(0.9130);">Mar 2, 2019 8:37:16 AM</div>
<div class="tx" style="font-size:9.3px;line-height:10px;color:#606060;transform:translate(572.60px,403.88px) scaleX(0.8432);">192.100.4....</div>
<div class="abs" style="left:650.00px;top:401px;width:99.60px;height:14px;overflow:hidden"><div class="tx" style="font-size:9.3px;line-height:10px;color:#606060;transform:translate(0px,2.88px) scaleX(0.9150);">sea15s07-in-f67.1e100.net</div></div>
<div class="row alt" style="top:418.05px;height:20.27px"><span class="c c-clock"><svg class="ic clock" viewBox="0 0 10 10"><circle cx="5" cy="5" r="4.100" fill="#f4f8ff" stroke="#2d5694" stroke-width="1.300"/><path d="M5 2.700V5.300H7" fill="none" stroke="#2d5694" stroke-width=".9"/></svg></span><span class="c c-bl"><svg class="ic blade" viewBox="0 0 12 8"><rect x="0.00" y="0.00" width="3.400" height="2.050" fill="#1f4d97"/><rect x="4.25" y="0.00" width="3.400" height="2.050" fill="#1f4d97"/><rect x="8.50" y="0.00" width="3.400" height="2.050" fill="#1f4d97"/><rect x="0.00" y="2.95" width="3.400" height="2.050" fill="#1f4d97"/><rect x="4.25" y="2.95" width="3.400" height="2.050" fill="#1f4d97"/><rect x="8.50" y="2.95" width="3.400" height="2.050" fill="#1f4d97"/><rect x="0.00" y="5.90" width="3.400" height="2.050" fill="#1f4d97"/><rect x="4.25" y="5.90" width="3.400" height="2.050" fill="#1f4d97"/><rect x="8.50" y="5.90" width="3.400" height="2.050" fill="#1f4d97"/></svg></span><span class="c c-ac"><svg class="ic acc" viewBox="0 0 10.200 10.200"><circle cx="5.100" cy="5.100" r="5.100" fill="#55ab26"/><path d="M3.500 1.500H6.700L8.200 8.900H2z" fill="#fff"/><path d="M.9 5.300h8.400" stroke="#fff" stroke-width="1.100"/><path d="M5.100 1.200V9.200" stroke="#55ab26" stroke-width="1.500" stroke-dasharray="1.700 .8"/></svg></span><span class="c c-ty"><svg class="ic typ" viewBox="0 0 10.400 10.400"><circle cx="5.200" cy="5.200" r="5.200" fill="#2a5592"/><path d="M1.500 3.500L4 1.600V2.900H6.400V4.100H4V5.400z" fill="#fff"/><path d="M9 7.100L6.500 5.200V6.500H4.100V7.700H6.500V9z" fill="#fff"/></svg></span><span class="c c-in"><svg class="ic dl" viewBox="-.3 -.3 7.400 9" preserveAspectRatio="none"><path d="M2.200 0h2.400v3.200h2.200L3.400 6.300 0 3.200h2.200z" fill="#24529a"/><rect x="0" y="7.300" width="6.800" height="1" fill="#24529a"/></svg></span><span class="c c-sf"><svg class="ic flag" viewBox="0 0 11.400 8"><rect width="11.400" height="8" fill="#f7e3e3"/><rect y="0" width="11.400" height="1.100" fill="#e2504c"/><rect y="2.300" width="11.400" height="1" fill="#ee9a96"/><rect y="4.500" width="11.400" height="1" fill="#ee9a96"/><rect y="6.700" width="11.400" height="1.300" fill="#e2504c"/><rect x=".3" y=".9" width="6" height="3.800" fill="#3f62d2"/><path d="M1.200 2h.8M2.900 2h.8M4.600 2h.8M2 3.400h.8M3.800 3.400h.8" stroke="#dfe6fb" stroke-width=".7"/></svg></span><span class="c c-df"><svg class="ic flag" viewBox="0 0 11.400 8"><rect width="11.400" height="8" fill="#f7e3e3"/><rect y="0" width="11.400" height="1.100" fill="#e2504c"/><rect y="2.300" width="11.400" height="1" fill="#ee9a96"/><rect y="4.500" width="11.400" height="1" fill="#ee9a96"/><rect y="6.700" width="11.400" height="1.300" fill="#e2504c"/><rect x=".3" y=".9" width="6" height="3.800" fill="#3f62d2"/><path d="M1.200 2h.8M2.900 2h.8M4.600 2h.8M2 3.400h.8M3.800 3.400h.8" stroke="#dfe6fb" stroke-width=".7"/></svg></span></div>
<div class="tx" style="font-size:9.3px;line-height:10px;color:#606060;transform:translate(350.80px,424.15px) scaleX(0.9130);">Mar 2, 2019 8:23:03 AM</div>
<div class="tx" style="font-size:9.3px;line-height:10px;color:#606060;transform:translate(572.60px,424.15px) scaleX(0.8432);">192.100.4....</div>
<div class="abs" style="left:650.00px;top:422px;width:99.60px;height:14px;overflow:hidden"><div class="tx" style="font-size:9.3px;line-height:10px;color:#606060;transform:translate(0px,2.15px) scaleX(0.9150);">lga15s43-in-f10.1e100.net</div></div>
<!-- v scrollbar -->
<div class="abs" style="left:750px;top:114px;width:12px;height:330.300px;background:#f0f0f0"></div>
<div class="abs" style="left:750.500px;top:127px;width:10.500px;height:49px;background:#c1c1c1"></div>
<svg class="abs" style="left:753.500px;top:119px;width:5px;height:3px" viewBox="0 0 5 3"><path d="M0 3h5L2.500 0z" fill="#8a8a8a"/></svg>
<svg class="abs" style="left:753px;top:435.500px;width:5px;height:2.800px" viewBox="0 0 5 3"><path d="M0 0h5L2.500 3z" fill="#505050"/></svg>
<!-- h scrollbar -->
<div class="abs" style="left:328px;top:444.300px;width:433px;height:11.400px;background:#f1f1f1"></div>
<div class="abs" style="left:341px;top:444.300px;width:311px;height:11.400px;background:#c1c1c1"></div>
<svg class="abs" style="left:333px;top:447.500px;width:3px;height:5px" viewBox="0 0 3 5"><path d="M3 0v5L0 2.500z" fill="#8a8a8a"/></svg>
<svg class="abs" style="left:742px;top:447.500px;width:3px;height:5px" viewBox="0 0 3 5"><path d="M0 0v5L3 2.500z" fill="#505050"/></svg>
<div class="abs" style="left:750px;top:444.300px;width:12px;height:11.400px;background:#dcdcdc"></div>

<!-- card -->
<div id="card"></div>
<svg class="abs" style="left:777.200px;top:100px;width:6px;height:5px" viewBox="0 0 6 5"><path d="M2.800 0v5L0 2.500zM6 0v5L3.200 2.500z" fill="#2f5597"/></svg>
<div class="abs" style="left:770px;top:262.500px;width:22px;height:30px"><div style="position:absolute;left:11px;top:15px;transform:translate(-50%,-50%) rotate(-90deg) scaleX(.93);font-size:9.300px;line-height:11px;color:#444;white-space:nowrap;will-change:transform">Card</div></div>

<div id="bottom"></div>
<div id="bottomline"></div><div class="abs" style="left:110px;top:464px;width:690px;height:1.300px;background:#1f3f66;z-index:2"></div>

</body></html>
